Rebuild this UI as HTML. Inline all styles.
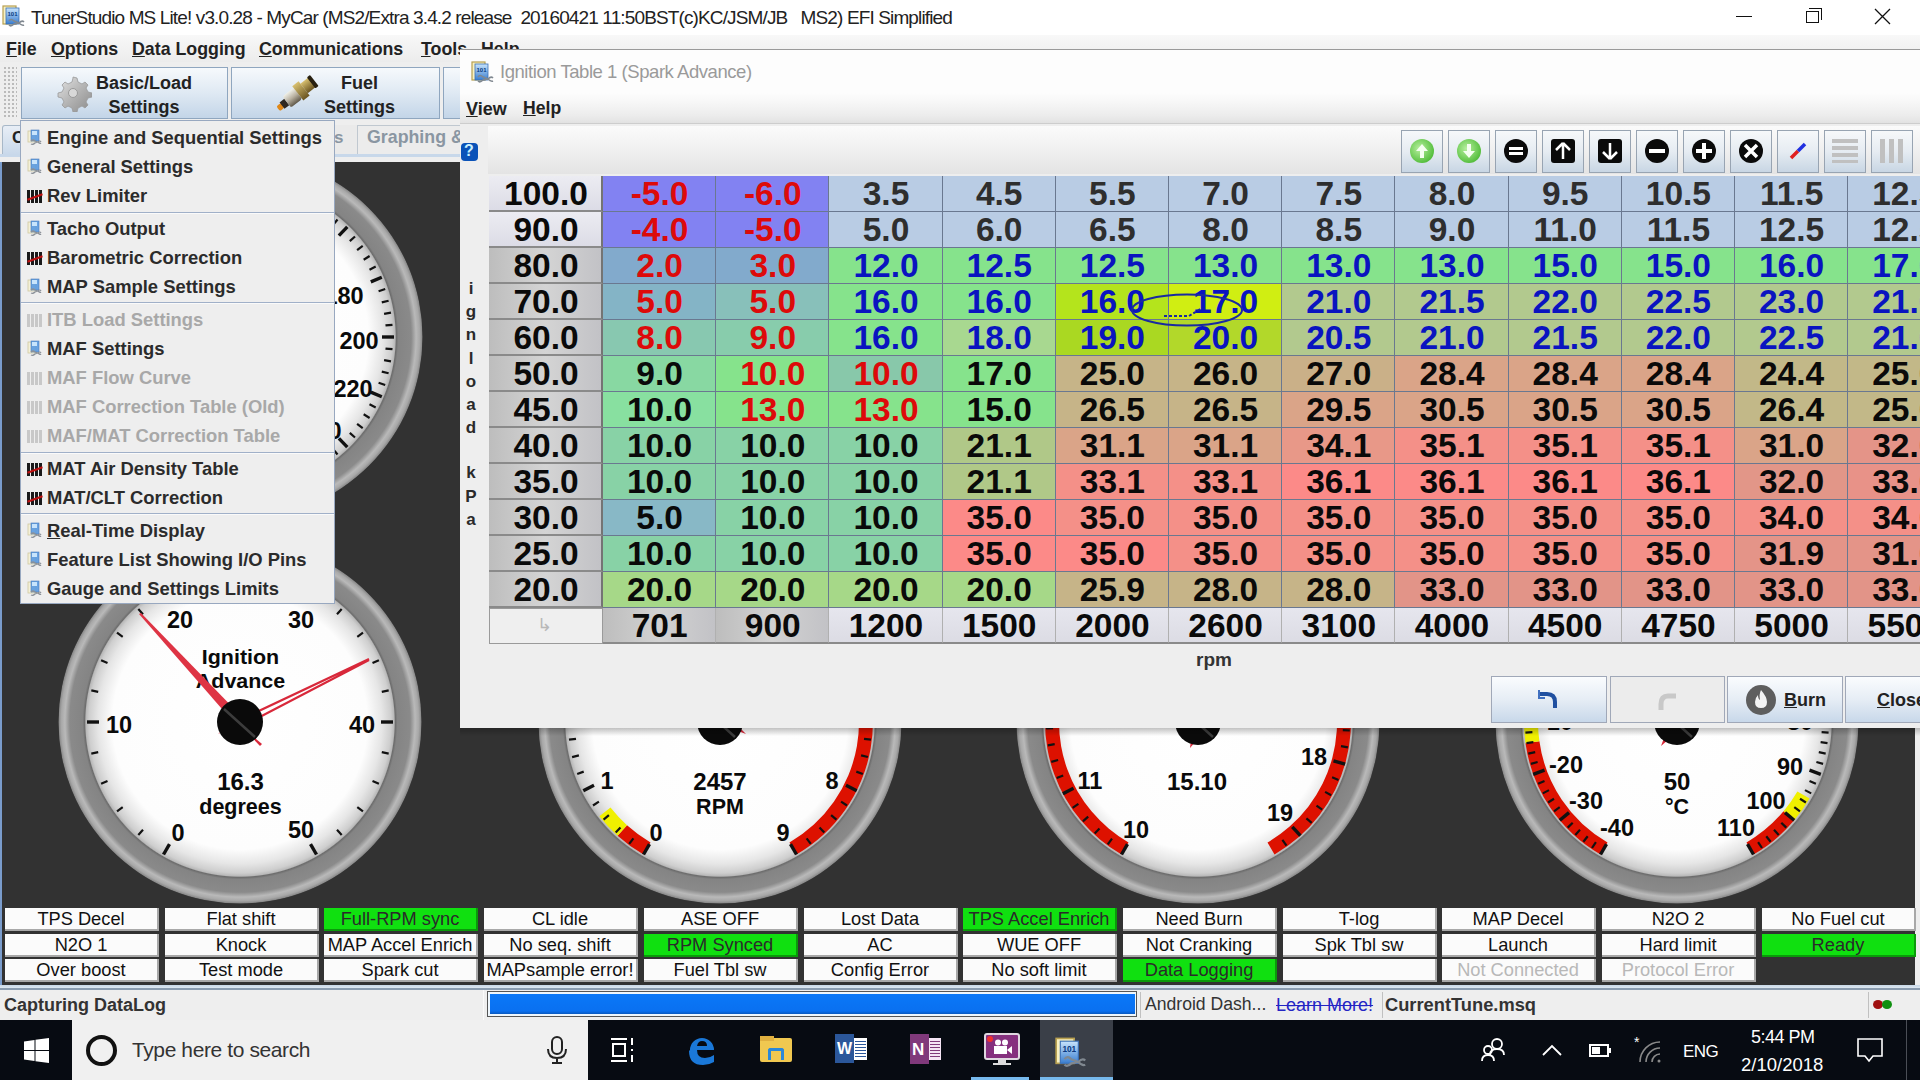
<!DOCTYPE html><html><head><meta charset="utf-8"><style>
*{margin:0;padding:0;box-sizing:border-box}
html,body{width:1920px;height:1080px;overflow:hidden;background:#333;font-family:"Liberation Sans",sans-serif}
.a{position:absolute}
.t{position:absolute;white-space:nowrap;line-height:1}
.b{font-weight:bold}
.u{text-decoration:underline}
</style></head><body>
<div class="a" style="left:0;top:0;width:1920px;height:35px;background:#fff"></div>
<svg class="a" style="left:0px;top:0px" width="26" height="28" viewBox="0 0 26 28"><defs><linearGradient id="tsg" x1="0" y1="0" x2="0" y2="1"><stop offset="0" stop-color="#c8e4fc"/><stop offset="1" stop-color="#3a7ed0"/></linearGradient></defs><rect x="3" y="6" width="13" height="18" fill="#f8f0c0" stroke="#b8a050" stroke-width="1.2"/><rect x="6" y="8" width="13" height="16" fill="url(#tsg)" stroke="#3a70b8" stroke-width="0.8"/><text x="12.5" y="16" font-family="Liberation Sans" font-weight="bold" font-size="6" text-anchor="middle" fill="#0a3a80">101</text><path d="M9 21 Q11 18 14 21 L19 23 Q22 20 24 22 M9 25 Q11 27 14 24 L19 23 Q22 26 24 25" stroke="#808890" stroke-width="1.6" fill="none"/></svg>
<div class="t" style="left:31px;top:8px;font-size:19px;letter-spacing:-0.87px;color:#222">TunerStudio MS Lite! v3.0.28 - MyCar (MS2/Extra 3.4.2 release&nbsp; 20160421 11:50BST(c)KC/JSM/JB&nbsp;&nbsp; MS2) EFI Simplified</div>
<div class="a" style="left:1736px;top:16px;width:16px;height:1px;background:#111"></div>
<div class="a" style="left:1806px;top:11px;width:13px;height:12px;border:1px solid #111;background:#fff"></div>
<div class="a" style="left:1809px;top:8px;width:13px;height:12px;border-top:1px solid #111;border-right:1px solid #111"></div>
<svg class="a" style="left:1874px;top:8px" width="17" height="17"><path d="M1 1L16 16M16 1L1 16" stroke="#111" stroke-width="1.3"/></svg>
<div class="a" style="left:0;top:35px;width:1920px;height:27px;background:linear-gradient(#f8f8f8,#ececec)"></div>
<div class="t b" style="left:6px;top:41px;font-size:17.8px;color:#222"><span class="u">F</span>ile</div>
<div class="t b" style="left:51px;top:41px;font-size:17.8px;color:#222"><span class="u">O</span>ptions</div>
<div class="t b" style="left:132px;top:41px;font-size:17.8px;color:#222"><span class="u">D</span>ata Logging</div>
<div class="t b" style="left:259px;top:41px;font-size:17.8px;color:#222"><span class="u">C</span>ommunications</div>
<div class="t b" style="left:421px;top:41px;font-size:17.8px;color:#222"><span class="u">T</span>ools</div>
<div class="t b" style="left:481px;top:41px;font-size:17.8px;color:#222"><span class="u">H</span>elp</div>
<div class="a" style="left:0;top:62px;width:460px;height:100px;background:#eeeeee"></div>
<div class="a" style="left:3px;top:66px;width:14px;height:52px;background-image:radial-gradient(#bbb 1px,transparent 1.2px);background-size:4px 4px"></div>
<div class="a" style="left:21px;top:67px;width:207px;height:52px;border:1px solid #8fa6bf;background:linear-gradient(#f6f9fc,#dfe9f3 50%,#c3d5e8)"></div>
<div class="t b" style="left:96px;top:70.5px;font-size:18px;color:#222;text-align:center;line-height:24px">Basic/Load<br>Settings</div>
<div class="a" style="left:231px;top:67px;width:209px;height:52px;border:1px solid #8fa6bf;background:linear-gradient(#f6f9fc,#dfe9f3 50%,#c3d5e8)"></div>
<div class="t b" style="left:324px;top:70.5px;font-size:18px;color:#222;text-align:center;line-height:24px">Fuel<br>Settings</div>
<div class="a" style="left:443px;top:67px;width:40px;height:52px;border:1px solid #8fa6bf;background:linear-gradient(#f6f9fc,#dfe9f3 50%,#c3d5e8)"></div>
<div class="t b" style="left:0px;top:70.5px;font-size:18px;color:#222;text-align:center;line-height:24px"><br></div>
<svg class="a" style="left:54px;top:74px" width="38" height="38" viewBox="0 0 38 38"><defs><linearGradient id="gr1" x1="0" y1="0" x2="1" y2="1"><stop offset="0" stop-color="#e4e4e4"/><stop offset="0.5" stop-color="#b4b4b4"/><stop offset="1" stop-color="#8a8a8a"/></linearGradient></defs><g fill="url(#gr1)" stroke="#999" stroke-width="0.8"><path d="M19 3l4 1 1 4 4 2 3-2 3 3-2 3 2 4 4 1v4l-4 1-2 4 2 3-3 3-3-2-4 2-1 4h-4l-1-4-4-2-3 2-3-3 2-3-2-4-4-1v-4l4-1 2-4-2-3 3-3 3 2 4-2 1-4z"/></g><circle cx="19" cy="19" r="4.5" fill="#d8d8d8" stroke="#999"/></svg>
<svg class="a" style="left:272px;top:72px" width="50" height="44" viewBox="0 0 50 44"><defs><linearGradient id="inj1" x1="0" y1="0" x2="0" y2="1"><stop offset="0" stop-color="#f0f0e8"/><stop offset="0.5" stop-color="#b8b0a0"/><stop offset="1" stop-color="#605848"/></linearGradient><linearGradient id="inj2" x1="0" y1="0" x2="0" y2="1"><stop offset="0" stop-color="#d8c070"/><stop offset="1" stop-color="#6a5420"/></linearGradient></defs><g transform="rotate(-38 25 22)"><rect x="1" y="19" width="6" height="6" rx="2" fill="#e08818"/><rect x="6" y="18" width="6" height="8" fill="#302820"/><rect x="12" y="15" width="14" height="14" rx="2" fill="url(#inj1)"/><rect x="26" y="13" width="8" height="18" fill="url(#inj2)"/><rect x="34" y="16" width="10" height="12" fill="url(#inj2)"/><rect x="43" y="15" width="4" height="14" rx="1" fill="#282010"/></g></svg>
<div class="a" style="left:0;top:119px;width:460px;height:43px;background:#eeeeee"></div>
<div class="a" style="left:2px;top:125px;width:60px;height:30px;border:1px solid #a8b8c8;border-bottom:none;background:linear-gradient(#e8eef6,#c8d8ea);border-radius:3px 3px 0 0"></div>
<div class="t b" style="left:12px;top:129px;font-size:17px;color:#222">C</div>
<div class="a" style="left:0;top:154px;width:460px;height:3px;background:#c8d8ea"></div>
<div class="a" style="left:334px;top:125px;width:24px;height:29px;border-right:1px solid #c0c8d0;background:#eaeaea"></div>
<div class="t b" style="left:334px;top:129px;font-size:17px;color:#8a96a2">s</div>
<div class="a" style="left:357px;top:125px;width:110px;height:29px;border-left:1px solid #c0c8d0;border-top:1px solid #c0c8d0;background:#ececec"></div>
<div class="t b" style="left:367px;top:129px;font-size:17.8px;color:#8a96a2">Graphing &amp;</div>
<div class="a" style="left:0;top:162px;width:1920px;height:826px;background:#323232"></div>
<div class="a" style="left:0;top:162px;width:2px;height:826px;background:#7a9ccc"></div>
<div class="a" style="left:1915px;top:162px;width:5px;height:826px;background:#eeeeee"></div>
<svg class="a" style="left:51px;top:147px" width="380" height="380" viewBox="-190 -190 380 380"><defs><radialGradient id="bz1" cx="0" cy="0" r="182" gradientUnits="userSpaceOnUse"><stop offset="0" stop-color="#fff"/><stop offset="0.70" stop-color="#fdfdfd"/><stop offset="0.78" stop-color="#e6e6e6"/><stop offset="0.83" stop-color="#cecece"/><stop offset="0.847" stop-color="#b8b8b8"/><stop offset="0.853" stop-color="#6c6c6c"/><stop offset="0.865" stop-color="#848484"/><stop offset="0.935" stop-color="#8a8a8a"/><stop offset="0.962" stop-color="#b9b9b9"/><stop offset="0.982" stop-color="#a8a8a8"/><stop offset="0.995" stop-color="#8a8a8a"/><stop offset="1" stop-color="#5a5a5a"/></radialGradient></defs><circle cx="0" cy="0" r="181.5" fill="url(#bz1)"/><line x1="-90.6" y1="108.0" x2="-98.3" y2="117.2" stroke="#111" stroke-width="3.4"/><line x1="-101.8" y1="103.2" x2="-106.7" y2="108.2" stroke="#111" stroke-width="2.2"/><line x1="-109.8" y1="94.7" x2="-115.1" y2="99.3" stroke="#111" stroke-width="2.2"/><line x1="-117.0" y1="85.6" x2="-122.7" y2="89.8" stroke="#111" stroke-width="2.2"/><line x1="-123.5" y1="76.0" x2="-129.5" y2="79.6" stroke="#111" stroke-width="2.2"/><line x1="-125.6" y1="64.0" x2="-136.3" y2="69.5" stroke="#111" stroke-width="3.4"/><line x1="-134.1" y1="55.3" x2="-140.5" y2="57.9" stroke="#111" stroke-width="2.2"/><line x1="-138.1" y1="44.3" x2="-144.7" y2="46.5" stroke="#111" stroke-width="2.2"/><line x1="-141.2" y1="33.1" x2="-148.0" y2="34.7" stroke="#111" stroke-width="2.2"/><line x1="-143.4" y1="21.7" x2="-150.3" y2="22.7" stroke="#111" stroke-width="2.2"/><line x1="-140.7" y1="9.8" x2="-152.6" y2="10.7" stroke="#111" stroke-width="3.4"/><line x1="-145.0" y1="-1.5" x2="-152.0" y2="-1.6" stroke="#111" stroke-width="2.2"/><line x1="-144.4" y1="-13.1" x2="-151.4" y2="-13.8" stroke="#111" stroke-width="2.2"/><line x1="-142.9" y1="-24.7" x2="-149.8" y2="-25.9" stroke="#111" stroke-width="2.2"/><line x1="-140.4" y1="-36.1" x2="-147.2" y2="-37.8" stroke="#111" stroke-width="2.2"/><line x1="-133.3" y1="-45.9" x2="-144.7" y2="-49.8" stroke="#111" stroke-width="3.4"/><line x1="-132.9" y1="-58.1" x2="-139.3" y2="-60.9" stroke="#111" stroke-width="2.2"/><line x1="-127.8" y1="-68.5" x2="-134.0" y2="-71.8" stroke="#111" stroke-width="2.2"/><line x1="-121.9" y1="-78.5" x2="-127.8" y2="-82.3" stroke="#111" stroke-width="2.2"/><line x1="-115.2" y1="-88.1" x2="-120.8" y2="-92.3" stroke="#111" stroke-width="2.2"/><line x1="-104.8" y1="-94.3" x2="-113.7" y2="-102.4" stroke="#111" stroke-width="3.4"/><line x1="-99.6" y1="-105.4" x2="-104.4" y2="-110.4" stroke="#111" stroke-width="2.2"/><line x1="-90.9" y1="-113.0" x2="-95.2" y2="-118.5" stroke="#111" stroke-width="2.2"/><line x1="-81.5" y1="-119.9" x2="-85.4" y2="-125.7" stroke="#111" stroke-width="2.2"/><line x1="-71.6" y1="-126.1" x2="-75.1" y2="-132.2" stroke="#111" stroke-width="2.2"/><line x1="-59.6" y1="-127.8" x2="-64.7" y2="-138.7" stroke="#111" stroke-width="3.4"/><line x1="-50.5" y1="-135.9" x2="-53.0" y2="-142.5" stroke="#111" stroke-width="2.2"/><line x1="-39.5" y1="-139.5" x2="-41.4" y2="-146.3" stroke="#111" stroke-width="2.2"/><line x1="-28.2" y1="-142.2" x2="-29.5" y2="-149.1" stroke="#111" stroke-width="2.2"/><line x1="-16.7" y1="-144.0" x2="-17.5" y2="-151.0" stroke="#111" stroke-width="2.2"/><line x1="-4.9" y1="-140.9" x2="-5.3" y2="-152.9" stroke="#111" stroke-width="3.4"/><line x1="6.6" y1="-144.9" x2="6.9" y2="-151.8" stroke="#111" stroke-width="2.2"/><line x1="18.2" y1="-143.9" x2="19.1" y2="-150.8" stroke="#111" stroke-width="2.2"/><line x1="29.7" y1="-141.9" x2="31.1" y2="-148.8" stroke="#111" stroke-width="2.2"/><line x1="40.9" y1="-139.1" x2="42.9" y2="-145.8" stroke="#111" stroke-width="2.2"/><line x1="50.5" y1="-131.6" x2="54.8" y2="-142.8" stroke="#111" stroke-width="3.4"/><line x1="62.7" y1="-130.8" x2="65.7" y2="-137.1" stroke="#111" stroke-width="2.2"/><line x1="72.9" y1="-125.3" x2="76.5" y2="-131.4" stroke="#111" stroke-width="2.2"/><line x1="82.8" y1="-119.1" x2="86.7" y2="-124.8" stroke="#111" stroke-width="2.2"/><line x1="92.0" y1="-112.0" x2="96.5" y2="-117.5" stroke="#111" stroke-width="2.2"/><line x1="97.9" y1="-101.4" x2="106.3" y2="-110.1" stroke="#111" stroke-width="3.4"/><line x1="108.8" y1="-95.9" x2="114.0" y2="-100.5" stroke="#111" stroke-width="2.2"/><line x1="116.1" y1="-86.9" x2="121.7" y2="-91.1" stroke="#111" stroke-width="2.2"/><line x1="122.7" y1="-77.3" x2="128.6" y2="-81.0" stroke="#111" stroke-width="2.2"/><line x1="128.5" y1="-67.2" x2="134.7" y2="-70.4" stroke="#111" stroke-width="2.2"/><line x1="129.8" y1="-55.1" x2="140.8" y2="-59.8" stroke="#111" stroke-width="3.4"/><line x1="137.6" y1="-45.8" x2="144.2" y2="-48.0" stroke="#111" stroke-width="2.2"/><line x1="140.8" y1="-34.6" x2="147.6" y2="-36.3" stroke="#111" stroke-width="2.2"/><line x1="143.1" y1="-23.2" x2="150.0" y2="-24.3" stroke="#111" stroke-width="2.2"/><line x1="144.5" y1="-11.6" x2="151.5" y2="-12.2" stroke="#111" stroke-width="2.2"/><line x1="141.0" y1="-0.0" x2="153.0" y2="-0.0" stroke="#111" stroke-width="3.4"/><line x1="144.5" y1="11.6" x2="151.5" y2="12.2" stroke="#111" stroke-width="2.2"/><line x1="143.1" y1="23.2" x2="150.0" y2="24.3" stroke="#111" stroke-width="2.2"/><line x1="140.8" y1="34.6" x2="147.6" y2="36.3" stroke="#111" stroke-width="2.2"/><line x1="137.6" y1="45.8" x2="144.2" y2="48.0" stroke="#111" stroke-width="2.2"/><line x1="129.8" y1="55.1" x2="140.8" y2="59.8" stroke="#111" stroke-width="3.4"/><line x1="128.5" y1="67.2" x2="134.7" y2="70.4" stroke="#111" stroke-width="2.2"/><line x1="122.7" y1="77.3" x2="128.6" y2="81.0" stroke="#111" stroke-width="2.2"/><line x1="116.1" y1="86.9" x2="121.7" y2="91.1" stroke="#111" stroke-width="2.2"/><line x1="108.8" y1="95.9" x2="114.0" y2="100.5" stroke="#111" stroke-width="2.2"/><line x1="97.9" y1="101.4" x2="106.3" y2="110.1" stroke="#111" stroke-width="3.4"/><line x1="92.0" y1="112.0" x2="96.5" y2="117.5" stroke="#111" stroke-width="2.2"/><line x1="82.8" y1="119.1" x2="86.7" y2="124.8" stroke="#111" stroke-width="2.2"/><line x1="72.9" y1="125.3" x2="76.5" y2="131.4" stroke="#111" stroke-width="2.2"/><line x1="62.7" y1="130.8" x2="65.7" y2="137.1" stroke="#111" stroke-width="2.2"/><line x1="50.5" y1="131.6" x2="54.8" y2="142.8" stroke="#111" stroke-width="3.4"/><text transform="translate(103.0,-32.6) scale(1.0,1)" font-family="Liberation Sans" font-weight="bold" font-size="23.5" text-anchor="middle" fill="#0a0a0a">180</text><text transform="translate(118.0,12.4) scale(1.0,1)" font-family="Liberation Sans" font-weight="bold" font-size="23.5" text-anchor="middle" fill="#0a0a0a">200</text><text transform="translate(112.0,60.4) scale(1.0,1)" font-family="Liberation Sans" font-weight="bold" font-size="23.5" text-anchor="middle" fill="#0a0a0a">220</text><text transform="translate(81.0,102.4) scale(1.0,1)" font-family="Liberation Sans" font-weight="bold" font-size="23.5" text-anchor="middle" fill="#0a0a0a">240</text></svg>
<svg class="a" style="left:50px;top:532px" width="380" height="380" viewBox="-190 -190 380 380"><defs><radialGradient id="bz2" cx="0" cy="0" r="182" gradientUnits="userSpaceOnUse"><stop offset="0" stop-color="#fff"/><stop offset="0.70" stop-color="#fdfdfd"/><stop offset="0.78" stop-color="#e6e6e6"/><stop offset="0.83" stop-color="#cecece"/><stop offset="0.847" stop-color="#b8b8b8"/><stop offset="0.853" stop-color="#6c6c6c"/><stop offset="0.865" stop-color="#848484"/><stop offset="0.935" stop-color="#8a8a8a"/><stop offset="0.962" stop-color="#b9b9b9"/><stop offset="0.982" stop-color="#a8a8a8"/><stop offset="0.995" stop-color="#8a8a8a"/><stop offset="1" stop-color="#5a5a5a"/></radialGradient></defs><circle cx="0" cy="0" r="181.5" fill="url(#bz2)"/><line x1="-70.5" y1="122.1" x2="-76.5" y2="132.5" stroke="#111" stroke-width="3.4"/><line x1="-97.0" y1="107.8" x2="-101.7" y2="113.0" stroke="#111" stroke-width="2.2"/><line x1="-117.3" y1="85.2" x2="-123.0" y2="89.3" stroke="#111" stroke-width="2.2"/><line x1="-132.5" y1="59.0" x2="-138.9" y2="61.8" stroke="#111" stroke-width="2.2"/><line x1="-141.8" y1="30.1" x2="-148.7" y2="31.6" stroke="#111" stroke-width="2.2"/><line x1="-141.0" y1="0.0" x2="-153.0" y2="0.0" stroke="#111" stroke-width="3.4"/><line x1="-141.8" y1="-30.1" x2="-148.7" y2="-31.6" stroke="#111" stroke-width="2.2"/><line x1="-132.5" y1="-59.0" x2="-138.9" y2="-61.8" stroke="#111" stroke-width="2.2"/><line x1="-117.3" y1="-85.2" x2="-123.0" y2="-89.3" stroke="#111" stroke-width="2.2"/><line x1="-97.0" y1="-107.8" x2="-101.7" y2="-113.0" stroke="#111" stroke-width="2.2"/><line x1="-70.5" y1="-122.1" x2="-76.5" y2="-132.5" stroke="#111" stroke-width="3.4"/><line x1="-44.8" y1="-137.9" x2="-47.0" y2="-144.6" stroke="#111" stroke-width="2.2"/><line x1="-15.2" y1="-144.2" x2="-15.9" y2="-151.2" stroke="#111" stroke-width="2.2"/><line x1="15.2" y1="-144.2" x2="15.9" y2="-151.2" stroke="#111" stroke-width="2.2"/><line x1="44.8" y1="-137.9" x2="47.0" y2="-144.6" stroke="#111" stroke-width="2.2"/><line x1="70.5" y1="-122.1" x2="76.5" y2="-132.5" stroke="#111" stroke-width="3.4"/><line x1="97.0" y1="-107.8" x2="101.7" y2="-113.0" stroke="#111" stroke-width="2.2"/><line x1="117.3" y1="-85.2" x2="123.0" y2="-89.3" stroke="#111" stroke-width="2.2"/><line x1="132.5" y1="-59.0" x2="138.9" y2="-61.8" stroke="#111" stroke-width="2.2"/><line x1="141.8" y1="-30.1" x2="148.7" y2="-31.6" stroke="#111" stroke-width="2.2"/><line x1="141.0" y1="-0.0" x2="153.0" y2="-0.0" stroke="#111" stroke-width="3.4"/><line x1="141.8" y1="30.1" x2="148.7" y2="31.6" stroke="#111" stroke-width="2.2"/><line x1="132.5" y1="59.0" x2="138.9" y2="61.8" stroke="#111" stroke-width="2.2"/><line x1="117.3" y1="85.2" x2="123.0" y2="89.3" stroke="#111" stroke-width="2.2"/><line x1="97.0" y1="107.8" x2="101.7" y2="113.0" stroke="#111" stroke-width="2.2"/><line x1="70.5" y1="122.1" x2="76.5" y2="132.5" stroke="#111" stroke-width="3.4"/><text transform="translate(-62.0,119.4) scale(1.0,1)" font-family="Liberation Sans" font-weight="bold" font-size="23.5" text-anchor="middle" fill="#0a0a0a">0</text><text transform="translate(-121.0,11.4) scale(1.0,1)" font-family="Liberation Sans" font-weight="bold" font-size="23.5" text-anchor="middle" fill="#0a0a0a">10</text><text transform="translate(-60.0,-93.6) scale(1.0,1)" font-family="Liberation Sans" font-weight="bold" font-size="23.5" text-anchor="middle" fill="#0a0a0a">20</text><text transform="translate(61.0,-93.6) scale(1.0,1)" font-family="Liberation Sans" font-weight="bold" font-size="23.5" text-anchor="middle" fill="#0a0a0a">30</text><text transform="translate(122.0,11.4) scale(1.0,1)" font-family="Liberation Sans" font-weight="bold" font-size="23.5" text-anchor="middle" fill="#0a0a0a">40</text><text transform="translate(61.0,116.4) scale(1.0,1)" font-family="Liberation Sans" font-weight="bold" font-size="23.5" text-anchor="middle" fill="#0a0a0a">50</text><text transform="translate(0.5,-58.0) scale(1.1,1)" font-family="Liberation Sans" font-weight="bold" font-size="19.5" text-anchor="middle" fill="#0a0a0a">Ignition</text><text transform="translate(0.5,-34.0) scale(1.1,1)" font-family="Liberation Sans" font-weight="bold" font-size="19.5" text-anchor="middle" fill="#0a0a0a">Advance</text><text transform="translate(0.5,67.6) scale(1.0,1)" font-family="Liberation Sans" font-weight="bold" font-size="24" text-anchor="middle" fill="#0a0a0a">16.3</text><text transform="translate(0.5,91.7) scale(1.0,1)" font-family="Liberation Sans" font-weight="bold" font-size="21.5" text-anchor="middle" fill="#0a0a0a">degrees</text><path d="M-4 3 L-101 -108 L-99 -109 L4 -3 Z" fill="#de3444"/><path d="M3 6 L22 22 L20 24 Z" fill="#d8283a"/><path d="M-4 4 L-22 12 L-12 4Z" fill="#d8283a"/><path d="M8 -6 L129 -63 M10 0 L129 -62" stroke="#d8283a" stroke-width="2.2" fill="none"/><circle cx="0" cy="0" r="23" fill="#0a0a0a"/><path d="M-16 -13 L15 15" stroke="#666" stroke-width="2.5" opacity="0.55"/></svg>
<svg class="a" style="left:530px;top:532px" width="380" height="380" viewBox="-190 -190 380 380"><defs><radialGradient id="bz3" cx="0" cy="0" r="182" gradientUnits="userSpaceOnUse"><stop offset="0" stop-color="#fff"/><stop offset="0.70" stop-color="#fdfdfd"/><stop offset="0.78" stop-color="#e6e6e6"/><stop offset="0.83" stop-color="#cecece"/><stop offset="0.847" stop-color="#b8b8b8"/><stop offset="0.853" stop-color="#6c6c6c"/><stop offset="0.865" stop-color="#848484"/><stop offset="0.935" stop-color="#8a8a8a"/><stop offset="0.962" stop-color="#b9b9b9"/><stop offset="0.982" stop-color="#a8a8a8"/><stop offset="0.995" stop-color="#8a8a8a"/><stop offset="1" stop-color="#5a5a5a"/></radialGradient></defs><circle cx="0" cy="0" r="181.5" fill="url(#bz3)"/><path d="M-76.5 132.5 A153 153 0 0 1 -102.4 113.7 L-93.0 103.3 A139 139 0 0 0 -69.5 120.4Z" fill="#dd1100"/><path d="M-102.4 113.7 A153 153 0 0 1 -120.6 94.2 L-109.5 85.6 A139 139 0 0 0 -93.0 103.3Z" fill="#f0f000"/><path d="M117.2 -98.3 A153 153 0 0 1 76.5 132.5 L69.5 120.4 A139 139 0 0 0 106.5 -89.3Z" fill="#dd1100"/><line x1="-70.5" y1="122.1" x2="-76.5" y2="132.5" stroke="#111" stroke-width="3.4"/><line x1="-86.6" y1="116.3" x2="-90.8" y2="121.9" stroke="#111" stroke-width="2.2"/><line x1="-99.5" y1="105.5" x2="-104.3" y2="110.6" stroke="#111" stroke-width="2.2"/><line x1="-111.1" y1="93.2" x2="-116.4" y2="97.7" stroke="#111" stroke-width="2.2"/><line x1="-121.1" y1="79.7" x2="-127.0" y2="83.5" stroke="#111" stroke-width="2.2"/><line x1="-126.0" y1="63.3" x2="-136.7" y2="68.7" stroke="#111" stroke-width="3.4"/><line x1="-136.3" y1="49.6" x2="-142.8" y2="52.0" stroke="#111" stroke-width="2.2"/><line x1="-141.1" y1="33.4" x2="-147.9" y2="35.1" stroke="#111" stroke-width="2.2"/><line x1="-144.0" y1="16.8" x2="-151.0" y2="17.6" stroke="#111" stroke-width="2.2"/><line x1="-145.0" y1="0.0" x2="-152.0" y2="0.0" stroke="#111" stroke-width="2.2"/><line x1="-140.0" y1="-16.4" x2="-152.0" y2="-17.8" stroke="#111" stroke-width="3.4"/><line x1="-141.1" y1="-33.4" x2="-147.9" y2="-35.1" stroke="#111" stroke-width="2.2"/><line x1="-136.3" y1="-49.6" x2="-142.8" y2="-52.0" stroke="#111" stroke-width="2.2"/><line x1="-129.6" y1="-65.1" x2="-135.8" y2="-68.2" stroke="#111" stroke-width="2.2"/><line x1="-121.1" y1="-79.7" x2="-127.0" y2="-83.5" stroke="#111" stroke-width="2.2"/><line x1="-108.0" y1="-90.6" x2="-117.2" y2="-98.3" stroke="#111" stroke-width="3.4"/><line x1="-99.5" y1="-105.5" x2="-104.3" y2="-110.6" stroke="#111" stroke-width="2.2"/><line x1="-86.6" y1="-116.3" x2="-90.8" y2="-121.9" stroke="#111" stroke-width="2.2"/><line x1="-72.5" y1="-125.6" x2="-76.0" y2="-131.6" stroke="#111" stroke-width="2.2"/><line x1="-57.4" y1="-133.1" x2="-60.2" y2="-139.6" stroke="#111" stroke-width="2.2"/><line x1="-40.4" y1="-135.1" x2="-43.9" y2="-146.6" stroke="#111" stroke-width="3.4"/><line x1="-25.2" y1="-142.8" x2="-26.4" y2="-149.7" stroke="#111" stroke-width="2.2"/><line x1="-8.4" y1="-144.8" x2="-8.8" y2="-151.7" stroke="#111" stroke-width="2.2"/><line x1="8.4" y1="-144.8" x2="8.8" y2="-151.7" stroke="#111" stroke-width="2.2"/><line x1="25.2" y1="-142.8" x2="26.4" y2="-149.7" stroke="#111" stroke-width="2.2"/><line x1="40.4" y1="-135.1" x2="43.9" y2="-146.6" stroke="#111" stroke-width="3.4"/><line x1="57.4" y1="-133.1" x2="60.2" y2="-139.6" stroke="#111" stroke-width="2.2"/><line x1="72.5" y1="-125.6" x2="76.0" y2="-131.6" stroke="#111" stroke-width="2.2"/><line x1="86.6" y1="-116.3" x2="90.8" y2="-121.9" stroke="#111" stroke-width="2.2"/><line x1="99.5" y1="-105.5" x2="104.3" y2="-110.6" stroke="#111" stroke-width="2.2"/><line x1="108.0" y1="-90.6" x2="117.2" y2="-98.4" stroke="#111" stroke-width="3.4"/><line x1="121.1" y1="-79.7" x2="127.0" y2="-83.5" stroke="#111" stroke-width="2.2"/><line x1="129.6" y1="-65.1" x2="135.8" y2="-68.2" stroke="#111" stroke-width="2.2"/><line x1="136.3" y1="-49.6" x2="142.8" y2="-52.0" stroke="#111" stroke-width="2.2"/><line x1="141.1" y1="-33.4" x2="147.9" y2="-35.1" stroke="#111" stroke-width="2.2"/><line x1="140.0" y1="-16.4" x2="152.0" y2="-17.8" stroke="#111" stroke-width="3.4"/><line x1="145.0" y1="-0.0" x2="152.0" y2="-0.0" stroke="#111" stroke-width="2.2"/><line x1="144.0" y1="16.8" x2="151.0" y2="17.6" stroke="#111" stroke-width="2.2"/><line x1="141.1" y1="33.4" x2="147.9" y2="35.0" stroke="#111" stroke-width="2.2"/><line x1="136.3" y1="49.6" x2="142.8" y2="52.0" stroke="#111" stroke-width="2.2"/><line x1="126.0" y1="63.3" x2="136.7" y2="68.7" stroke="#111" stroke-width="3.4"/><line x1="121.1" y1="79.7" x2="127.0" y2="83.5" stroke="#111" stroke-width="2.2"/><line x1="111.1" y1="93.2" x2="116.4" y2="97.7" stroke="#111" stroke-width="2.2"/><line x1="99.5" y1="105.5" x2="104.3" y2="110.6" stroke="#111" stroke-width="2.2"/><line x1="86.6" y1="116.3" x2="90.8" y2="121.9" stroke="#111" stroke-width="2.2"/><line x1="70.5" y1="122.1" x2="76.5" y2="132.5" stroke="#111" stroke-width="3.4"/><text transform="translate(-64.0,119.4) scale(1.0,1)" font-family="Liberation Sans" font-weight="bold" font-size="23.5" text-anchor="middle" fill="#0a0a0a">0</text><text transform="translate(-113.0,67.4) scale(1.0,1)" font-family="Liberation Sans" font-weight="bold" font-size="23.5" text-anchor="middle" fill="#0a0a0a">1</text><text transform="translate(112.0,67.4) scale(1.0,1)" font-family="Liberation Sans" font-weight="bold" font-size="23.5" text-anchor="middle" fill="#0a0a0a">8</text><text transform="translate(63.0,119.4) scale(1.0,1)" font-family="Liberation Sans" font-weight="bold" font-size="23.5" text-anchor="middle" fill="#0a0a0a">9</text><text transform="translate(0.0,67.6) scale(1.0,1)" font-family="Liberation Sans" font-weight="bold" font-size="24" text-anchor="middle" fill="#0a0a0a">2457</text><text transform="translate(0.0,91.7) scale(1.0,1)" font-family="Liberation Sans" font-weight="bold" font-size="21.5" text-anchor="middle" fill="#0a0a0a">RPM</text><path d="M10 6 L26 12 L12 -2Z" fill="#d8283a"/><circle cx="0" cy="0" r="23" fill="#0a0a0a"/><path d="M-16 -13 L15 15" stroke="#666" stroke-width="2.5" opacity="0.55"/></svg>
<svg class="a" style="left:1008px;top:532px" width="380" height="380" viewBox="-190 -190 380 380"><defs><radialGradient id="bz4" cx="0" cy="0" r="182" gradientUnits="userSpaceOnUse"><stop offset="0" stop-color="#fff"/><stop offset="0.70" stop-color="#fdfdfd"/><stop offset="0.78" stop-color="#e6e6e6"/><stop offset="0.83" stop-color="#cecece"/><stop offset="0.847" stop-color="#b8b8b8"/><stop offset="0.853" stop-color="#6c6c6c"/><stop offset="0.865" stop-color="#848484"/><stop offset="0.935" stop-color="#8a8a8a"/><stop offset="0.962" stop-color="#b9b9b9"/><stop offset="0.982" stop-color="#a8a8a8"/><stop offset="0.995" stop-color="#8a8a8a"/><stop offset="1" stop-color="#5a5a5a"/></radialGradient></defs><circle cx="0" cy="0" r="181.5" fill="url(#bz4)"/><path d="M-76.5 132.5 A153 153 0 0 1 -143.8 -52.3 L-130.6 -47.5 A139 139 0 0 0 -69.5 120.4Z" fill="#dd1100"/><path d="M132.5 -76.5 A153 153 0 0 1 76.5 132.5 L69.5 120.4 A139 139 0 0 0 120.4 -69.5Z" fill="#dd1100"/><line x1="-70.5" y1="122.1" x2="-76.5" y2="132.5" stroke="#111" stroke-width="3.4"/><line x1="-86.0" y1="116.7" x2="-90.2" y2="122.3" stroke="#111" stroke-width="2.2"/><line x1="-98.5" y1="106.4" x2="-103.3" y2="111.5" stroke="#111" stroke-width="2.2"/><line x1="-109.8" y1="94.7" x2="-115.1" y2="99.3" stroke="#111" stroke-width="2.2"/><line x1="-119.6" y1="81.9" x2="-125.4" y2="85.9" stroke="#111" stroke-width="2.2"/><line x1="-124.5" y1="66.2" x2="-135.1" y2="71.8" stroke="#111" stroke-width="3.4"/><line x1="-134.8" y1="53.4" x2="-141.3" y2="56.0" stroke="#111" stroke-width="2.2"/><line x1="-139.9" y1="38.0" x2="-146.7" y2="39.9" stroke="#111" stroke-width="2.2"/><line x1="-143.3" y1="22.2" x2="-150.2" y2="23.3" stroke="#111" stroke-width="2.2"/><line x1="-144.9" y1="6.1" x2="-151.9" y2="6.4" stroke="#111" stroke-width="2.2"/><line x1="-140.7" y1="-9.8" x2="-152.6" y2="-10.7" stroke="#111" stroke-width="3.4"/><line x1="-142.6" y1="-26.2" x2="-149.5" y2="-27.4" stroke="#111" stroke-width="2.2"/><line x1="-138.8" y1="-41.9" x2="-145.5" y2="-43.9" stroke="#111" stroke-width="2.2"/><line x1="-133.3" y1="-57.1" x2="-139.7" y2="-59.9" stroke="#111" stroke-width="2.2"/><line x1="-126.1" y1="-71.6" x2="-132.2" y2="-75.1" stroke="#111" stroke-width="2.2"/><line x1="-114.1" y1="-82.9" x2="-123.8" y2="-89.9" stroke="#111" stroke-width="3.4"/><line x1="-107.1" y1="-97.8" x2="-112.2" y2="-102.5" stroke="#111" stroke-width="2.2"/><line x1="-95.5" y1="-109.1" x2="-100.1" y2="-114.4" stroke="#111" stroke-width="2.2"/><line x1="-82.8" y1="-119.1" x2="-86.7" y2="-124.8" stroke="#111" stroke-width="2.2"/><line x1="-69.0" y1="-127.5" x2="-72.3" y2="-133.7" stroke="#111" stroke-width="2.2"/><line x1="-52.8" y1="-130.7" x2="-57.3" y2="-141.9" stroke="#111" stroke-width="3.4"/><line x1="-39.0" y1="-139.7" x2="-40.9" y2="-146.4" stroke="#111" stroke-width="2.2"/><line x1="-23.2" y1="-143.1" x2="-24.3" y2="-150.0" stroke="#111" stroke-width="2.2"/><line x1="-7.1" y1="-144.8" x2="-7.4" y2="-151.8" stroke="#111" stroke-width="2.2"/><line x1="9.1" y1="-144.7" x2="9.5" y2="-151.7" stroke="#111" stroke-width="2.2"/><line x1="24.5" y1="-138.9" x2="26.6" y2="-150.7" stroke="#111" stroke-width="3.4"/><line x1="40.9" y1="-139.1" x2="42.9" y2="-145.8" stroke="#111" stroke-width="2.2"/><line x1="56.2" y1="-133.7" x2="58.9" y2="-140.1" stroke="#111" stroke-width="2.2"/><line x1="70.7" y1="-126.6" x2="74.2" y2="-132.7" stroke="#111" stroke-width="2.2"/><line x1="84.4" y1="-117.9" x2="88.5" y2="-123.6" stroke="#111" stroke-width="2.2"/><line x1="94.3" y1="-104.8" x2="102.4" y2="-113.7" stroke="#111" stroke-width="3.4"/><line x1="108.4" y1="-96.3" x2="113.7" y2="-100.9" stroke="#111" stroke-width="2.2"/><line x1="118.5" y1="-83.6" x2="124.2" y2="-87.6" stroke="#111" stroke-width="2.2"/><line x1="127.1" y1="-69.9" x2="133.2" y2="-73.2" stroke="#111" stroke-width="2.2"/><line x1="134.1" y1="-55.3" x2="140.5" y2="-57.9" stroke="#111" stroke-width="2.2"/><line x1="135.5" y1="-38.9" x2="147.1" y2="-42.2" stroke="#111" stroke-width="3.4"/><line x1="143.0" y1="-24.2" x2="149.9" y2="-25.3" stroke="#111" stroke-width="2.2"/><line x1="144.8" y1="-8.1" x2="151.8" y2="-8.5" stroke="#111" stroke-width="2.2"/><line x1="144.8" y1="8.1" x2="151.8" y2="8.5" stroke="#111" stroke-width="2.2"/><line x1="143.0" y1="24.2" x2="149.9" y2="25.3" stroke="#111" stroke-width="2.2"/><line x1="135.5" y1="38.9" x2="147.1" y2="42.2" stroke="#111" stroke-width="3.4"/><line x1="134.1" y1="55.3" x2="140.5" y2="57.9" stroke="#111" stroke-width="2.2"/><line x1="127.1" y1="69.9" x2="133.2" y2="73.2" stroke="#111" stroke-width="2.2"/><line x1="118.5" y1="83.6" x2="124.2" y2="87.6" stroke="#111" stroke-width="2.2"/><line x1="108.4" y1="96.3" x2="113.7" y2="100.9" stroke="#111" stroke-width="2.2"/><line x1="94.3" y1="104.8" x2="102.4" y2="113.7" stroke="#111" stroke-width="3.4"/><line x1="84.4" y1="117.9" x2="88.5" y2="123.6" stroke="#111" stroke-width="2.2"/><text transform="translate(-62.0,116.4) scale(1.0,1)" font-family="Liberation Sans" font-weight="bold" font-size="23.5" text-anchor="middle" fill="#0a0a0a">10</text><text transform="translate(-108.0,67.4) scale(1.0,1)" font-family="Liberation Sans" font-weight="bold" font-size="23.5" text-anchor="middle" fill="#0a0a0a">11</text><text transform="translate(116.0,43.4) scale(1.0,1)" font-family="Liberation Sans" font-weight="bold" font-size="23.5" text-anchor="middle" fill="#0a0a0a">18</text><text transform="translate(82.0,99.4) scale(1.0,1)" font-family="Liberation Sans" font-weight="bold" font-size="23.5" text-anchor="middle" fill="#0a0a0a">19</text><text transform="translate(-1.0,67.6) scale(1.0,1)" font-family="Liberation Sans" font-weight="bold" font-size="24" text-anchor="middle" fill="#0a0a0a">15.10</text><path d="M-6 10 L-8 26 L4 12Z" fill="#d8283a"/><circle cx="0" cy="0" r="23" fill="#0a0a0a"/><path d="M-16 -13 L15 15" stroke="#666" stroke-width="2.5" opacity="0.55"/></svg>
<svg class="a" style="left:1487px;top:532px" width="380" height="380" viewBox="-190 -190 380 380"><defs><radialGradient id="bz5" cx="0" cy="0" r="182" gradientUnits="userSpaceOnUse"><stop offset="0" stop-color="#fff"/><stop offset="0.70" stop-color="#fdfdfd"/><stop offset="0.78" stop-color="#e6e6e6"/><stop offset="0.83" stop-color="#cecece"/><stop offset="0.847" stop-color="#b8b8b8"/><stop offset="0.853" stop-color="#6c6c6c"/><stop offset="0.865" stop-color="#848484"/><stop offset="0.935" stop-color="#8a8a8a"/><stop offset="0.962" stop-color="#b9b9b9"/><stop offset="0.982" stop-color="#a8a8a8"/><stop offset="0.995" stop-color="#8a8a8a"/><stop offset="1" stop-color="#5a5a5a"/></radialGradient></defs><circle cx="0" cy="0" r="181.5" fill="url(#bz5)"/><path d="M-76.5 132.5 A153 153 0 0 1 -151.5 21.3 L-137.6 19.3 A139 139 0 0 0 -69.5 120.4Z" fill="#dd1100"/><path d="M-151.5 21.3 A153 153 0 0 1 -152.4 -13.3 L-138.5 -12.1 A139 139 0 0 0 -137.6 19.3Z" fill="#f0f000"/><path d="M117.2 98.3 A153 153 0 0 1 76.5 132.5 L69.5 120.4 A139 139 0 0 0 106.5 89.3Z" fill="#dd1100"/><path d="M132.5 76.5 A153 153 0 0 1 117.2 98.3 L106.5 89.3 A139 139 0 0 0 120.4 69.5Z" fill="#f0f000"/><line x1="-70.5" y1="122.1" x2="-76.5" y2="132.5" stroke="#111" stroke-width="3.4"/><line x1="-81.1" y1="120.2" x2="-85.0" y2="126.0" stroke="#111" stroke-width="2.2"/><line x1="-89.3" y1="114.3" x2="-93.6" y2="119.8" stroke="#111" stroke-width="2.2"/><line x1="-97.0" y1="107.8" x2="-101.7" y2="113.0" stroke="#111" stroke-width="2.2"/><line x1="-104.3" y1="100.7" x2="-109.3" y2="105.6" stroke="#111" stroke-width="2.2"/><line x1="-108.0" y1="90.6" x2="-117.2" y2="98.3" stroke="#111" stroke-width="3.4"/><line x1="-117.3" y1="85.2" x2="-123.0" y2="89.3" stroke="#111" stroke-width="2.2"/><line x1="-123.0" y1="76.8" x2="-128.9" y2="80.5" stroke="#111" stroke-width="2.2"/><line x1="-128.0" y1="68.1" x2="-134.2" y2="71.4" stroke="#111" stroke-width="2.2"/><line x1="-132.5" y1="59.0" x2="-138.9" y2="61.8" stroke="#111" stroke-width="2.2"/><line x1="-132.5" y1="48.2" x2="-143.8" y2="52.3" stroke="#111" stroke-width="3.4"/><line x1="-139.4" y1="40.0" x2="-146.1" y2="41.9" stroke="#111" stroke-width="2.2"/><line x1="-141.8" y1="30.1" x2="-148.7" y2="31.6" stroke="#111" stroke-width="2.2"/><line x1="-143.6" y1="20.2" x2="-150.5" y2="21.2" stroke="#111" stroke-width="2.2"/><line x1="-144.6" y1="10.1" x2="-151.6" y2="10.6" stroke="#111" stroke-width="2.2"/><line x1="-141.0" y1="0.0" x2="-153.0" y2="0.0" stroke="#111" stroke-width="3.4"/><line x1="-144.6" y1="-10.1" x2="-151.6" y2="-10.6" stroke="#111" stroke-width="2.2"/><line x1="-143.6" y1="-20.2" x2="-150.5" y2="-21.2" stroke="#111" stroke-width="2.2"/><line x1="-141.8" y1="-30.1" x2="-148.7" y2="-31.6" stroke="#111" stroke-width="2.2"/><line x1="-139.4" y1="-40.0" x2="-146.1" y2="-41.9" stroke="#111" stroke-width="2.2"/><line x1="-132.5" y1="-48.2" x2="-143.8" y2="-52.3" stroke="#111" stroke-width="3.4"/><line x1="-132.5" y1="-59.0" x2="-138.9" y2="-61.8" stroke="#111" stroke-width="2.2"/><line x1="-128.0" y1="-68.1" x2="-134.2" y2="-71.4" stroke="#111" stroke-width="2.2"/><line x1="-123.0" y1="-76.8" x2="-128.9" y2="-80.5" stroke="#111" stroke-width="2.2"/><line x1="-117.3" y1="-85.2" x2="-123.0" y2="-89.3" stroke="#111" stroke-width="2.2"/><line x1="-108.0" y1="-90.6" x2="-117.2" y2="-98.3" stroke="#111" stroke-width="3.4"/><line x1="-104.3" y1="-100.7" x2="-109.3" y2="-105.6" stroke="#111" stroke-width="2.2"/><line x1="-97.0" y1="-107.8" x2="-101.7" y2="-113.0" stroke="#111" stroke-width="2.2"/><line x1="-89.3" y1="-114.3" x2="-93.6" y2="-119.8" stroke="#111" stroke-width="2.2"/><line x1="-81.1" y1="-120.2" x2="-85.0" y2="-126.0" stroke="#111" stroke-width="2.2"/><line x1="-70.5" y1="-122.1" x2="-76.5" y2="-132.5" stroke="#111" stroke-width="3.4"/><line x1="-63.6" y1="-130.3" x2="-66.6" y2="-136.6" stroke="#111" stroke-width="2.2"/><line x1="-54.3" y1="-134.4" x2="-56.9" y2="-140.9" stroke="#111" stroke-width="2.2"/><line x1="-44.8" y1="-137.9" x2="-47.0" y2="-144.6" stroke="#111" stroke-width="2.2"/><line x1="-35.1" y1="-140.7" x2="-36.8" y2="-147.5" stroke="#111" stroke-width="2.2"/><line x1="-24.5" y1="-138.9" x2="-26.6" y2="-150.7" stroke="#111" stroke-width="3.4"/><line x1="-15.2" y1="-144.2" x2="-15.9" y2="-151.2" stroke="#111" stroke-width="2.2"/><line x1="-5.1" y1="-144.9" x2="-5.3" y2="-151.9" stroke="#111" stroke-width="2.2"/><line x1="5.1" y1="-144.9" x2="5.3" y2="-151.9" stroke="#111" stroke-width="2.2"/><line x1="15.2" y1="-144.2" x2="15.9" y2="-151.2" stroke="#111" stroke-width="2.2"/><line x1="24.5" y1="-138.9" x2="26.6" y2="-150.7" stroke="#111" stroke-width="3.4"/><line x1="35.1" y1="-140.7" x2="36.8" y2="-147.5" stroke="#111" stroke-width="2.2"/><line x1="44.8" y1="-137.9" x2="47.0" y2="-144.6" stroke="#111" stroke-width="2.2"/><line x1="54.3" y1="-134.4" x2="56.9" y2="-140.9" stroke="#111" stroke-width="2.2"/><line x1="63.6" y1="-130.3" x2="66.6" y2="-136.6" stroke="#111" stroke-width="2.2"/><line x1="70.5" y1="-122.1" x2="76.5" y2="-132.5" stroke="#111" stroke-width="3.4"/><line x1="81.1" y1="-120.2" x2="85.0" y2="-126.0" stroke="#111" stroke-width="2.2"/><line x1="89.3" y1="-114.3" x2="93.6" y2="-119.8" stroke="#111" stroke-width="2.2"/><line x1="97.0" y1="-107.8" x2="101.7" y2="-113.0" stroke="#111" stroke-width="2.2"/><line x1="104.3" y1="-100.7" x2="109.3" y2="-105.6" stroke="#111" stroke-width="2.2"/><line x1="108.0" y1="-90.6" x2="117.2" y2="-98.3" stroke="#111" stroke-width="3.4"/><line x1="117.3" y1="-85.2" x2="123.0" y2="-89.3" stroke="#111" stroke-width="2.2"/><line x1="123.0" y1="-76.8" x2="128.9" y2="-80.5" stroke="#111" stroke-width="2.2"/><line x1="128.0" y1="-68.1" x2="134.2" y2="-71.4" stroke="#111" stroke-width="2.2"/><line x1="132.5" y1="-59.0" x2="138.9" y2="-61.8" stroke="#111" stroke-width="2.2"/><line x1="132.5" y1="-48.2" x2="143.8" y2="-52.3" stroke="#111" stroke-width="3.4"/><line x1="139.4" y1="-40.0" x2="146.1" y2="-41.9" stroke="#111" stroke-width="2.2"/><line x1="141.8" y1="-30.1" x2="148.7" y2="-31.6" stroke="#111" stroke-width="2.2"/><line x1="143.6" y1="-20.2" x2="150.5" y2="-21.2" stroke="#111" stroke-width="2.2"/><line x1="144.6" y1="-10.1" x2="151.6" y2="-10.6" stroke="#111" stroke-width="2.2"/><line x1="141.0" y1="-0.0" x2="153.0" y2="-0.0" stroke="#111" stroke-width="3.4"/><line x1="144.6" y1="10.1" x2="151.6" y2="10.6" stroke="#111" stroke-width="2.2"/><line x1="143.6" y1="20.2" x2="150.5" y2="21.2" stroke="#111" stroke-width="2.2"/><line x1="141.8" y1="30.1" x2="148.7" y2="31.6" stroke="#111" stroke-width="2.2"/><line x1="139.4" y1="40.0" x2="146.1" y2="41.9" stroke="#111" stroke-width="2.2"/><line x1="132.5" y1="48.2" x2="143.8" y2="52.3" stroke="#111" stroke-width="3.4"/><line x1="132.5" y1="59.0" x2="138.9" y2="61.8" stroke="#111" stroke-width="2.2"/><line x1="128.0" y1="68.1" x2="134.2" y2="71.4" stroke="#111" stroke-width="2.2"/><line x1="123.0" y1="76.8" x2="128.9" y2="80.5" stroke="#111" stroke-width="2.2"/><line x1="117.3" y1="85.2" x2="123.0" y2="89.3" stroke="#111" stroke-width="2.2"/><line x1="108.0" y1="90.6" x2="117.2" y2="98.3" stroke="#111" stroke-width="3.4"/><line x1="104.3" y1="100.7" x2="109.3" y2="105.6" stroke="#111" stroke-width="2.2"/><line x1="97.0" y1="107.8" x2="101.7" y2="113.0" stroke="#111" stroke-width="2.2"/><line x1="89.3" y1="114.3" x2="93.6" y2="119.8" stroke="#111" stroke-width="2.2"/><line x1="81.1" y1="120.2" x2="85.0" y2="126.0" stroke="#111" stroke-width="2.2"/><line x1="70.5" y1="122.1" x2="76.5" y2="132.5" stroke="#111" stroke-width="3.4"/><text transform="translate(-60.0,114.4) scale(1.0,1)" font-family="Liberation Sans" font-weight="bold" font-size="23.5" text-anchor="middle" fill="#0a0a0a">-40</text><text transform="translate(-91.0,87.4) scale(1.0,1)" font-family="Liberation Sans" font-weight="bold" font-size="23.5" text-anchor="middle" fill="#0a0a0a">-30</text><text transform="translate(-111.0,51.4) scale(1.0,1)" font-family="Liberation Sans" font-weight="bold" font-size="23.5" text-anchor="middle" fill="#0a0a0a">-20</text><text transform="translate(-121.0,8.4) scale(1.0,1)" font-family="Liberation Sans" font-weight="bold" font-size="23.5" text-anchor="middle" fill="#0a0a0a">-10</text><text transform="translate(113.0,53.4) scale(1.0,1)" font-family="Liberation Sans" font-weight="bold" font-size="23.5" text-anchor="middle" fill="#0a0a0a">90</text><text transform="translate(89.0,87.4) scale(1.0,1)" font-family="Liberation Sans" font-weight="bold" font-size="23.5" text-anchor="middle" fill="#0a0a0a">100</text><text transform="translate(59.0,114.4) scale(1.0,1)" font-family="Liberation Sans" font-weight="bold" font-size="23.5" text-anchor="middle" fill="#0a0a0a">110</text><text transform="translate(123.0,8.4) scale(1.0,1)" font-family="Liberation Sans" font-weight="bold" font-size="23.5" text-anchor="middle" fill="#0a0a0a">80</text><text transform="translate(0.0,67.6) scale(1.0,1)" font-family="Liberation Sans" font-weight="bold" font-size="24" text-anchor="middle" fill="#0a0a0a">50</text><text transform="translate(0.0,91.7) scale(1.0,1)" font-family="Liberation Sans" font-weight="bold" font-size="21.5" text-anchor="middle" fill="#0a0a0a">°C</text><path d="M-10 8 L-16 24 L-2 12Z" fill="#d8283a"/><circle cx="0" cy="0" r="23" fill="#0a0a0a"/><path d="M-16 -13 L15 15" stroke="#666" stroke-width="2.5" opacity="0.55"/></svg>
<div class="a" style="left:5px;top:908px;width:154px;height:23px;background:#fbfbfb;border-right:2px solid #a8a8a8;border-bottom:2px solid #a8a8a8"></div>
<div class="t" style="left:5px;top:910px;width:152px;text-align:center;font-size:18.25px;color:#111">TPS Decel</div>
<div class="a" style="left:5px;top:934px;width:154px;height:23px;background:#fbfbfb;border-right:2px solid #a8a8a8;border-bottom:2px solid #a8a8a8"></div>
<div class="t" style="left:5px;top:936px;width:152px;text-align:center;font-size:18.25px;color:#111">N2O 1</div>
<div class="a" style="left:5px;top:959px;width:154px;height:23px;background:#fbfbfb;border-right:2px solid #a8a8a8;border-bottom:2px solid #a8a8a8"></div>
<div class="t" style="left:5px;top:961px;width:152px;text-align:center;font-size:18.25px;color:#111">Over boost</div>
<div class="a" style="left:165px;top:908px;width:154px;height:23px;background:#fbfbfb;border-right:2px solid #a8a8a8;border-bottom:2px solid #a8a8a8"></div>
<div class="t" style="left:165px;top:910px;width:152px;text-align:center;font-size:18.25px;color:#111">Flat shift</div>
<div class="a" style="left:165px;top:934px;width:154px;height:23px;background:#fbfbfb;border-right:2px solid #a8a8a8;border-bottom:2px solid #a8a8a8"></div>
<div class="t" style="left:165px;top:936px;width:152px;text-align:center;font-size:18.25px;color:#111">Knock</div>
<div class="a" style="left:165px;top:959px;width:154px;height:23px;background:#fbfbfb;border-right:2px solid #a8a8a8;border-bottom:2px solid #a8a8a8"></div>
<div class="t" style="left:165px;top:961px;width:152px;text-align:center;font-size:18.25px;color:#111">Test mode</div>
<div class="a" style="left:324px;top:908px;width:154px;height:23px;background:#10e010;border-right:2px solid #0a9a0a;border-bottom:2px solid #0a9a0a"></div>
<div class="t" style="left:324px;top:910px;width:152px;text-align:center;font-size:18.25px;color:#2a2a2a">Full-RPM sync</div>
<div class="a" style="left:324px;top:934px;width:154px;height:23px;background:#fbfbfb;border-right:2px solid #a8a8a8;border-bottom:2px solid #a8a8a8"></div>
<div class="t" style="left:324px;top:936px;width:152px;text-align:center;font-size:18.25px;color:#111">MAP Accel Enrich</div>
<div class="a" style="left:324px;top:959px;width:154px;height:23px;background:#fbfbfb;border-right:2px solid #a8a8a8;border-bottom:2px solid #a8a8a8"></div>
<div class="t" style="left:324px;top:961px;width:152px;text-align:center;font-size:18.25px;color:#111">Spark cut</div>
<div class="a" style="left:484px;top:908px;width:154px;height:23px;background:#fbfbfb;border-right:2px solid #a8a8a8;border-bottom:2px solid #a8a8a8"></div>
<div class="t" style="left:484px;top:910px;width:152px;text-align:center;font-size:18.25px;color:#111">CL idle</div>
<div class="a" style="left:484px;top:934px;width:154px;height:23px;background:#fbfbfb;border-right:2px solid #a8a8a8;border-bottom:2px solid #a8a8a8"></div>
<div class="t" style="left:484px;top:936px;width:152px;text-align:center;font-size:18.25px;color:#111">No seq. shift</div>
<div class="a" style="left:484px;top:959px;width:154px;height:23px;background:#fbfbfb;border-right:2px solid #a8a8a8;border-bottom:2px solid #a8a8a8"></div>
<div class="t" style="left:484px;top:961px;width:152px;text-align:center;font-size:18.25px;color:#111">MAPsample error!</div>
<div class="a" style="left:644px;top:908px;width:154px;height:23px;background:#fbfbfb;border-right:2px solid #a8a8a8;border-bottom:2px solid #a8a8a8"></div>
<div class="t" style="left:644px;top:910px;width:152px;text-align:center;font-size:18.25px;color:#111">ASE OFF</div>
<div class="a" style="left:644px;top:934px;width:154px;height:23px;background:#10e010;border-right:2px solid #0a9a0a;border-bottom:2px solid #0a9a0a"></div>
<div class="t" style="left:644px;top:936px;width:152px;text-align:center;font-size:18.25px;color:#2a2a2a">RPM Synced</div>
<div class="a" style="left:644px;top:959px;width:154px;height:23px;background:#fbfbfb;border-right:2px solid #a8a8a8;border-bottom:2px solid #a8a8a8"></div>
<div class="t" style="left:644px;top:961px;width:152px;text-align:center;font-size:18.25px;color:#111">Fuel Tbl sw</div>
<div class="a" style="left:804px;top:908px;width:154px;height:23px;background:#fbfbfb;border-right:2px solid #a8a8a8;border-bottom:2px solid #a8a8a8"></div>
<div class="t" style="left:804px;top:910px;width:152px;text-align:center;font-size:18.25px;color:#111">Lost Data</div>
<div class="a" style="left:804px;top:934px;width:154px;height:23px;background:#fbfbfb;border-right:2px solid #a8a8a8;border-bottom:2px solid #a8a8a8"></div>
<div class="t" style="left:804px;top:936px;width:152px;text-align:center;font-size:18.25px;color:#111">AC</div>
<div class="a" style="left:804px;top:959px;width:154px;height:23px;background:#fbfbfb;border-right:2px solid #a8a8a8;border-bottom:2px solid #a8a8a8"></div>
<div class="t" style="left:804px;top:961px;width:152px;text-align:center;font-size:18.25px;color:#111">Config Error</div>
<div class="a" style="left:963px;top:908px;width:154px;height:23px;background:#10e010;border-right:2px solid #0a9a0a;border-bottom:2px solid #0a9a0a"></div>
<div class="t" style="left:963px;top:910px;width:152px;text-align:center;font-size:18.25px;color:#2a2a2a">TPS Accel Enrich</div>
<div class="a" style="left:963px;top:934px;width:154px;height:23px;background:#fbfbfb;border-right:2px solid #a8a8a8;border-bottom:2px solid #a8a8a8"></div>
<div class="t" style="left:963px;top:936px;width:152px;text-align:center;font-size:18.25px;color:#111">WUE OFF</div>
<div class="a" style="left:963px;top:959px;width:154px;height:23px;background:#fbfbfb;border-right:2px solid #a8a8a8;border-bottom:2px solid #a8a8a8"></div>
<div class="t" style="left:963px;top:961px;width:152px;text-align:center;font-size:18.25px;color:#111">No soft limit</div>
<div class="a" style="left:1123px;top:908px;width:154px;height:23px;background:#fbfbfb;border-right:2px solid #a8a8a8;border-bottom:2px solid #a8a8a8"></div>
<div class="t" style="left:1123px;top:910px;width:152px;text-align:center;font-size:18.25px;color:#111">Need Burn</div>
<div class="a" style="left:1123px;top:934px;width:154px;height:23px;background:#fbfbfb;border-right:2px solid #a8a8a8;border-bottom:2px solid #a8a8a8"></div>
<div class="t" style="left:1123px;top:936px;width:152px;text-align:center;font-size:18.25px;color:#111">Not Cranking</div>
<div class="a" style="left:1123px;top:959px;width:154px;height:23px;background:#10e010;border-right:2px solid #0a9a0a;border-bottom:2px solid #0a9a0a"></div>
<div class="t" style="left:1123px;top:961px;width:152px;text-align:center;font-size:18.25px;color:#2a2a2a">Data Logging</div>
<div class="a" style="left:1283px;top:908px;width:154px;height:23px;background:#fbfbfb;border-right:2px solid #a8a8a8;border-bottom:2px solid #a8a8a8"></div>
<div class="t" style="left:1283px;top:910px;width:152px;text-align:center;font-size:18.25px;color:#111">T-log</div>
<div class="a" style="left:1283px;top:934px;width:154px;height:23px;background:#fbfbfb;border-right:2px solid #a8a8a8;border-bottom:2px solid #a8a8a8"></div>
<div class="t" style="left:1283px;top:936px;width:152px;text-align:center;font-size:18.25px;color:#111">Spk Tbl sw</div>
<div class="a" style="left:1283px;top:959px;width:154px;height:23px;background:#fbfbfb;border-right:2px solid #a8a8a8;border-bottom:2px solid #a8a8a8"></div>
<div class="a" style="left:1442px;top:908px;width:154px;height:23px;background:#fbfbfb;border-right:2px solid #a8a8a8;border-bottom:2px solid #a8a8a8"></div>
<div class="t" style="left:1442px;top:910px;width:152px;text-align:center;font-size:18.25px;color:#111">MAP Decel</div>
<div class="a" style="left:1442px;top:934px;width:154px;height:23px;background:#fbfbfb;border-right:2px solid #a8a8a8;border-bottom:2px solid #a8a8a8"></div>
<div class="t" style="left:1442px;top:936px;width:152px;text-align:center;font-size:18.25px;color:#111">Launch</div>
<div class="a" style="left:1442px;top:959px;width:154px;height:23px;background:#fbfbfb;border-right:2px solid #a8a8a8;border-bottom:2px solid #a8a8a8"></div>
<div class="t" style="left:1442px;top:961px;width:152px;text-align:center;font-size:18.25px;color:#b8b8b8">Not Connected</div>
<div class="a" style="left:1602px;top:908px;width:154px;height:23px;background:#fbfbfb;border-right:2px solid #a8a8a8;border-bottom:2px solid #a8a8a8"></div>
<div class="t" style="left:1602px;top:910px;width:152px;text-align:center;font-size:18.25px;color:#111">N2O 2</div>
<div class="a" style="left:1602px;top:934px;width:154px;height:23px;background:#fbfbfb;border-right:2px solid #a8a8a8;border-bottom:2px solid #a8a8a8"></div>
<div class="t" style="left:1602px;top:936px;width:152px;text-align:center;font-size:18.25px;color:#111">Hard limit</div>
<div class="a" style="left:1602px;top:959px;width:154px;height:23px;background:#fbfbfb;border-right:2px solid #a8a8a8;border-bottom:2px solid #a8a8a8"></div>
<div class="t" style="left:1602px;top:961px;width:152px;text-align:center;font-size:18.25px;color:#b8b8b8">Protocol Error</div>
<div class="a" style="left:1762px;top:908px;width:154px;height:23px;background:#fbfbfb;border-right:2px solid #a8a8a8;border-bottom:2px solid #a8a8a8"></div>
<div class="t" style="left:1762px;top:910px;width:152px;text-align:center;font-size:18.25px;color:#111">No Fuel cut</div>
<div class="a" style="left:1762px;top:934px;width:154px;height:23px;background:#10e010;border-right:2px solid #0a9a0a;border-bottom:2px solid #0a9a0a"></div>
<div class="t" style="left:1762px;top:936px;width:152px;text-align:center;font-size:18.25px;color:#2a2a2a">Ready</div>
<div class="a" style="left:0;top:985px;width:1920px;height:5px;background:linear-gradient(#c8d8e8 0,#dce6f0 55%,#8a9cb0 60%,#8a9cb0 100%)"></div>
<div class="a" style="left:0;top:990px;width:1920px;height:30px;background:#eeeeee"></div>
<div class="t b" style="left:4px;top:996px;font-size:18px;color:#333">Capturing DataLog</div>
<div class="a" style="left:487px;top:991px;width:650px;height:26px;border:1px solid #555;background:#eef6fc"></div>
<div class="a" style="left:490px;top:994px;width:645px;height:20px;background:linear-gradient(#0a78f8,#0a70f0 85%,#0858c0)"></div>
<div class="a" style="left:483px;top:990px;width:1px;height:30px;background:#fafafa"></div>
<div class="a" style="left:1140px;top:992px;width:1px;height:26px;background:#c0c0c0"></div>
<div class="t" style="left:1145px;top:996px;font-size:17.6px;color:#333">Android Dash...</div>
<div class="t" style="left:1276px;top:996px;font-size:18px;color:#2424c4;text-decoration:line-through">Learn More!</div>
<div class="a" style="left:1382px;top:992px;width:1px;height:26px;background:#c0c0c0"></div>
<div class="t b" style="left:1385px;top:996px;font-size:18.3px;color:#333">CurrentTune.msq</div>
<div class="a" style="left:1868px;top:992px;width:1px;height:26px;background:#c0c0c0"></div>
<div class="a" style="left:1873px;top:1000px;width:10px;height:9px;border-radius:50%;background:#a01010"></div>
<div class="a" style="left:1882px;top:1000px;width:10px;height:9px;border-radius:50%;background:#109010"></div>
<div class="a" style="left:20px;top:120px;width:315px;height:484px;background:#eeeeee;border:1px solid #98a8c0"></div>
<svg class="a" style="left:26px;top:128px" width="17" height="18" viewBox="0 0 17 18"><rect x="2" y="3" width="8" height="11" fill="#f4f0d8" stroke="#d0c8a0" stroke-width="0.8"/><rect x="5" y="2" width="8" height="11" fill="#5a9ae0" stroke="#3a70b8" stroke-width="0.6" opacity="0.9"/><rect x="6" y="3" width="5" height="4" fill="#c8e4fc"/><path d="M5 13 Q7 11 9 13 L12 14 Q14 12 15 14 M5 16 Q7 17 9 15 L12 14 Q14 16 15 15" stroke="#8a9098" stroke-width="1.2" fill="none"/></svg>
<div class="t b" style="left:47px;top:129px;font-size:18.4px;color:#2b2b2b">Engine and Sequential Settings</div>
<svg class="a" style="left:26px;top:157px" width="17" height="18" viewBox="0 0 17 18"><rect x="2" y="3" width="8" height="11" fill="#f4f0d8" stroke="#d0c8a0" stroke-width="0.8"/><rect x="5" y="2" width="8" height="11" fill="#5a9ae0" stroke="#3a70b8" stroke-width="0.6" opacity="0.9"/><rect x="6" y="3" width="5" height="4" fill="#c8e4fc"/><path d="M5 13 Q7 11 9 13 L12 14 Q14 12 15 14 M5 16 Q7 17 9 15 L12 14 Q14 16 15 15" stroke="#8a9098" stroke-width="1.2" fill="none"/></svg>
<div class="t b" style="left:47px;top:158px;font-size:18.4px;color:#2b2b2b">General Settings</div>
<div class="a" style="left:27px;top:190px;width:16px;height:13px;background:repeating-linear-gradient(90deg,#1a1a1a 0 3px,transparent 3px 4px)"></div>
<div class="a" style="left:27px;top:196px;width:16px;height:2px;background:#c01010;transform:rotate(-20deg)"></div>
<div class="t b" style="left:47px;top:187px;font-size:18.4px;color:#2b2b2b">Rev Limiter</div>
<div class="a" style="left:21px;top:212px;width:313px;height:1px;background:#a0b0c8"></div>
<div class="a" style="left:21px;top:213px;width:313px;height:1px;background:#fafafa"></div>
<svg class="a" style="left:26px;top:219px" width="17" height="18" viewBox="0 0 17 18"><rect x="2" y="3" width="8" height="11" fill="#f4f0d8" stroke="#d0c8a0" stroke-width="0.8"/><rect x="5" y="2" width="8" height="11" fill="#5a9ae0" stroke="#3a70b8" stroke-width="0.6" opacity="0.9"/><rect x="6" y="3" width="5" height="4" fill="#c8e4fc"/><path d="M5 13 Q7 11 9 13 L12 14 Q14 12 15 14 M5 16 Q7 17 9 15 L12 14 Q14 16 15 15" stroke="#8a9098" stroke-width="1.2" fill="none"/></svg>
<div class="t b" style="left:47px;top:220px;font-size:18.4px;color:#2b2b2b">Tacho Output</div>
<div class="a" style="left:27px;top:252px;width:16px;height:13px;background:repeating-linear-gradient(90deg,#1a1a1a 0 3px,transparent 3px 4px)"></div>
<div class="a" style="left:27px;top:258px;width:16px;height:2px;background:#c01010;transform:rotate(-20deg)"></div>
<div class="t b" style="left:47px;top:249px;font-size:18.4px;color:#2b2b2b">Barometric Correction</div>
<svg class="a" style="left:26px;top:277px" width="17" height="18" viewBox="0 0 17 18"><rect x="2" y="3" width="8" height="11" fill="#f4f0d8" stroke="#d0c8a0" stroke-width="0.8"/><rect x="5" y="2" width="8" height="11" fill="#5a9ae0" stroke="#3a70b8" stroke-width="0.6" opacity="0.9"/><rect x="6" y="3" width="5" height="4" fill="#c8e4fc"/><path d="M5 13 Q7 11 9 13 L12 14 Q14 12 15 14 M5 16 Q7 17 9 15 L12 14 Q14 16 15 15" stroke="#8a9098" stroke-width="1.2" fill="none"/></svg>
<div class="t b" style="left:47px;top:278px;font-size:18.4px;color:#2b2b2b">MAP Sample Settings</div>
<div class="a" style="left:21px;top:302px;width:313px;height:1px;background:#a0b0c8"></div>
<div class="a" style="left:21px;top:303px;width:313px;height:1px;background:#fafafa"></div>
<div class="a" style="left:27px;top:314px;width:16px;height:13px;background:repeating-linear-gradient(90deg,#c8c8c8 0 3px,transparent 3px 4px)"></div>
<div class="t b" style="left:47px;top:311px;font-size:18.4px;color:#a8a8a8">ITB Load Settings</div>
<svg class="a" style="left:26px;top:339px" width="17" height="18" viewBox="0 0 17 18"><rect x="2" y="3" width="8" height="11" fill="#f4f0d8" stroke="#d0c8a0" stroke-width="0.8"/><rect x="5" y="2" width="8" height="11" fill="#5a9ae0" stroke="#3a70b8" stroke-width="0.6" opacity="0.9"/><rect x="6" y="3" width="5" height="4" fill="#c8e4fc"/><path d="M5 13 Q7 11 9 13 L12 14 Q14 12 15 14 M5 16 Q7 17 9 15 L12 14 Q14 16 15 15" stroke="#8a9098" stroke-width="1.2" fill="none"/></svg>
<div class="t b" style="left:47px;top:340px;font-size:18.4px;color:#2b2b2b">MAF Settings</div>
<div class="a" style="left:27px;top:372px;width:16px;height:13px;background:repeating-linear-gradient(90deg,#c8c8c8 0 3px,transparent 3px 4px)"></div>
<div class="t b" style="left:47px;top:369px;font-size:18.4px;color:#a8a8a8">MAF Flow Curve</div>
<div class="a" style="left:27px;top:401px;width:16px;height:13px;background:repeating-linear-gradient(90deg,#c8c8c8 0 3px,transparent 3px 4px)"></div>
<div class="t b" style="left:47px;top:398px;font-size:18.4px;color:#a8a8a8">MAF Correction Table (Old)</div>
<div class="a" style="left:27px;top:430px;width:16px;height:13px;background:repeating-linear-gradient(90deg,#c8c8c8 0 3px,transparent 3px 4px)"></div>
<div class="t b" style="left:47px;top:427px;font-size:18.4px;color:#a8a8a8">MAF/MAT Correction Table</div>
<div class="a" style="left:21px;top:452px;width:313px;height:1px;background:#a0b0c8"></div>
<div class="a" style="left:21px;top:453px;width:313px;height:1px;background:#fafafa"></div>
<div class="a" style="left:27px;top:463px;width:16px;height:13px;background:repeating-linear-gradient(90deg,#1a1a1a 0 3px,transparent 3px 4px)"></div>
<div class="a" style="left:27px;top:469px;width:16px;height:2px;background:#c01010;transform:rotate(-20deg)"></div>
<div class="t b" style="left:47px;top:460px;font-size:18.4px;color:#2b2b2b">MAT Air Density Table</div>
<div class="a" style="left:27px;top:492px;width:16px;height:13px;background:repeating-linear-gradient(90deg,#1a1a1a 0 3px,transparent 3px 4px)"></div>
<div class="a" style="left:27px;top:498px;width:16px;height:2px;background:#c01010;transform:rotate(-20deg)"></div>
<div class="t b" style="left:47px;top:489px;font-size:18.4px;color:#2b2b2b">MAT/CLT Correction</div>
<div class="a" style="left:21px;top:513px;width:313px;height:1px;background:#a0b0c8"></div>
<div class="a" style="left:21px;top:514px;width:313px;height:1px;background:#fafafa"></div>
<svg class="a" style="left:26px;top:521px" width="17" height="18" viewBox="0 0 17 18"><rect x="2" y="3" width="8" height="11" fill="#f4f0d8" stroke="#d0c8a0" stroke-width="0.8"/><rect x="5" y="2" width="8" height="11" fill="#5a9ae0" stroke="#3a70b8" stroke-width="0.6" opacity="0.9"/><rect x="6" y="3" width="5" height="4" fill="#c8e4fc"/><path d="M5 13 Q7 11 9 13 L12 14 Q14 12 15 14 M5 16 Q7 17 9 15 L12 14 Q14 16 15 15" stroke="#8a9098" stroke-width="1.2" fill="none"/></svg>
<div class="t b" style="left:47px;top:522px;font-size:18.4px;color:#2b2b2b"><span class="u">R</span>eal-Time Display</div>
<svg class="a" style="left:26px;top:550px" width="17" height="18" viewBox="0 0 17 18"><rect x="2" y="3" width="8" height="11" fill="#f4f0d8" stroke="#d0c8a0" stroke-width="0.8"/><rect x="5" y="2" width="8" height="11" fill="#5a9ae0" stroke="#3a70b8" stroke-width="0.6" opacity="0.9"/><rect x="6" y="3" width="5" height="4" fill="#c8e4fc"/><path d="M5 13 Q7 11 9 13 L12 14 Q14 12 15 14 M5 16 Q7 17 9 15 L12 14 Q14 16 15 15" stroke="#8a9098" stroke-width="1.2" fill="none"/></svg>
<div class="t b" style="left:47px;top:551px;font-size:18.4px;color:#2b2b2b">Feature List Showing I/O Pins</div>
<svg class="a" style="left:26px;top:579px" width="17" height="18" viewBox="0 0 17 18"><rect x="2" y="3" width="8" height="11" fill="#f4f0d8" stroke="#d0c8a0" stroke-width="0.8"/><rect x="5" y="2" width="8" height="11" fill="#5a9ae0" stroke="#3a70b8" stroke-width="0.6" opacity="0.9"/><rect x="6" y="3" width="5" height="4" fill="#c8e4fc"/><path d="M5 13 Q7 11 9 13 L12 14 Q14 12 15 14 M5 16 Q7 17 9 15 L12 14 Q14 16 15 15" stroke="#8a9098" stroke-width="1.2" fill="none"/></svg>
<div class="t b" style="left:47px;top:580px;font-size:18.4px;color:#2b2b2b">Gauge and Settings Limits</div>
<div class="a" style="left:460px;top:49px;width:1460px;height:1px;background:#9a9a9a"></div>
<div class="a" style="left:460px;top:50px;width:1460px;height:678px;background:#eeeeee"></div>
<div class="a" style="left:460px;top:50px;width:1460px;height:43px;background:#fdfdfd"></div>
<svg class="a" style="left:469px;top:56px" width="26" height="28" viewBox="0 0 26 28"><defs><linearGradient id="tsg" x1="0" y1="0" x2="0" y2="1"><stop offset="0" stop-color="#c8e4fc"/><stop offset="1" stop-color="#3a7ed0"/></linearGradient></defs><rect x="3" y="6" width="13" height="18" fill="#f8f0c0" stroke="#b8a050" stroke-width="1.2"/><rect x="6" y="8" width="13" height="16" fill="url(#tsg)" stroke="#3a70b8" stroke-width="0.8"/><text x="12.5" y="16" font-family="Liberation Sans" font-weight="bold" font-size="6" text-anchor="middle" fill="#0a3a80">101</text><path d="M9 21 Q11 18 14 21 L19 23 Q22 20 24 22 M9 25 Q11 27 14 24 L19 23 Q22 26 24 25" stroke="#808890" stroke-width="1.6" fill="none"/></svg>
<div class="t" style="left:500px;top:63px;font-size:18.5px;letter-spacing:-0.45px;color:#9a9a9a">Ignition Table 1 (Spark Advance)</div>
<div class="a" style="left:460px;top:93px;width:1460px;height:30px;background:linear-gradient(#fdfdfd,#f8f8f8 25%,#ececec 75%,#e2e2e2)"></div>
<div class="a" style="left:460px;top:123px;width:1460px;height:1px;background:#cdcdcd"></div>
<div class="t b" style="left:466px;top:100px;font-size:18px;color:#222"><span class="u">V</span>iew</div>
<div class="t b" style="left:523px;top:100px;font-size:17.6px;color:#222"><span class="u">H</span>elp</div>
<div class="a" style="left:488px;top:126px;width:1432px;height:48px;background:linear-gradient(#fbfbfb,#f2f2f2 40%,#e4e4e4)"></div>
<div class="a" style="left:461px;top:143px;width:17px;height:18px;border-radius:4px;background:#0a52b8"></div>
<div class="t b" style="left:464px;top:143px;font-size:16px;color:#c8f0ff">?</div>
<div class="a" style="left:1401px;top:130px;width:42px;height:43px;border:1px solid #98a4b2;background:linear-gradient(#f6f8fa,#e6ecf2 50%,#c8d6e4)"></div>
<div class="a" style="left:1410px;top:139px;width:24px;height:24px;border-radius:50%;background:radial-gradient(circle at 40% 40%,#b8f0a0,#58c040 70%,#3a9a2a)"></div>
<svg class="a" style="left:1410px;top:139px" width="24" height="24"><path d="M12 5L6 12H10V19H14V12H18Z" fill="#f4fff0"/></svg>
<div class="a" style="left:1448px;top:130px;width:42px;height:43px;border:1px solid #98a4b2;background:linear-gradient(#f6f8fa,#e6ecf2 50%,#c8d6e4)"></div>
<div class="a" style="left:1457px;top:139px;width:24px;height:24px;border-radius:50%;background:radial-gradient(circle at 40% 40%,#b8f0a0,#58c040 70%,#3a9a2a)"></div>
<svg class="a" style="left:1457px;top:139px" width="24" height="24"><path d="M12 19L6 12H10V5H14V12H18Z" fill="#f4fff0"/></svg>
<div class="a" style="left:1495px;top:130px;width:42px;height:43px;border:1px solid #98a4b2;background:linear-gradient(#f6f8fa,#e6ecf2 50%,#c8d6e4)"></div>
<div class="a" style="left:1504px;top:139px;width:24px;height:24px;border-radius:50%;background:#0a0a0a"></div>
<div class="a" style="left:1509px;top:147px;width:14px;height:3px;background:#fff"></div><div class="a" style="left:1509px;top:152px;width:14px;height:3px;background:#fff"></div>
<div class="a" style="left:1542px;top:130px;width:42px;height:43px;border:1px solid #98a4b2;background:linear-gradient(#f6f8fa,#e6ecf2 50%,#c8d6e4)"></div>
<div class="a" style="left:1551px;top:139px;width:24px;height:24px;border-radius:3px;background:#0a0a0a"></div>
<svg class="a" style="left:1551px;top:139px" width="24" height="24"><path d="M12 4L5 11M12 4L19 11M12 4V20" stroke="#fff" stroke-width="2.5" fill="none"/></svg>
<div class="a" style="left:1589px;top:130px;width:42px;height:43px;border:1px solid #98a4b2;background:linear-gradient(#f6f8fa,#e6ecf2 50%,#c8d6e4)"></div>
<div class="a" style="left:1598px;top:139px;width:24px;height:24px;border-radius:3px;background:#0a0a0a"></div>
<svg class="a" style="left:1598px;top:139px" width="24" height="24"><path d="M12 20L5 13M12 20L19 13M12 20V4" stroke="#fff" stroke-width="2.5" fill="none"/></svg>
<div class="a" style="left:1636px;top:130px;width:42px;height:43px;border:1px solid #98a4b2;background:linear-gradient(#f6f8fa,#e6ecf2 50%,#c8d6e4)"></div>
<div class="a" style="left:1645px;top:139px;width:24px;height:24px;border-radius:50%;background:#0a0a0a"></div>
<div class="a" style="left:1649px;top:149px;width:16px;height:4px;background:#fff"></div>
<div class="a" style="left:1683px;top:130px;width:42px;height:43px;border:1px solid #98a4b2;background:linear-gradient(#f6f8fa,#e6ecf2 50%,#c8d6e4)"></div>
<div class="a" style="left:1692px;top:139px;width:24px;height:24px;border-radius:50%;background:#0a0a0a"></div>
<div class="a" style="left:1696px;top:149px;width:16px;height:4px;background:#fff"></div><div class="a" style="left:1702px;top:143px;width:4px;height:16px;background:#fff"></div>
<div class="a" style="left:1730px;top:130px;width:42px;height:43px;border:1px solid #98a4b2;background:linear-gradient(#f6f8fa,#e6ecf2 50%,#c8d6e4)"></div>
<div class="a" style="left:1739px;top:139px;width:24px;height:24px;border-radius:50%;background:#0a0a0a"></div>
<svg class="a" style="left:1743px;top:143px" width="16" height="16"><path d="M2 2L14 14M14 2L2 14" stroke="#fff" stroke-width="3.5"/></svg>
<div class="a" style="left:1777px;top:130px;width:42px;height:43px;border:1px solid #98a4b2;background:linear-gradient(#f6f8fa,#e6ecf2 50%,#c8d6e4)"></div>
<svg class="a" style="left:1788px;top:141px" width="20" height="20"><path d="M3 17L10 10" stroke="#e02020" stroke-width="3.5"/><path d="M10 10L17 3" stroke="#2030e0" stroke-width="3.5"/></svg>
<div class="a" style="left:1824px;top:130px;width:42px;height:43px;border:1px solid #98a4b2;background:linear-gradient(#f6f8fa,#e6ecf2 50%,#c8d6e4)"></div>
<div class="a" style="left:1832px;top:139px;width:26px;height:24px;background:repeating-linear-gradient(180deg,#c0c0c0 0 4px,transparent 4px 7px)"></div>
<div class="a" style="left:1871px;top:130px;width:42px;height:43px;border:1px solid #98a4b2;background:linear-gradient(#f6f8fa,#e6ecf2 50%,#c8d6e4)"></div>
<div class="a" style="left:1880px;top:139px;width:24px;height:24px;background:repeating-linear-gradient(90deg,#c0c0c0 0 5px,transparent 5px 9px)"></div>
<div class="t b" style="left:464px;top:280.0px;width:14px;text-align:center;font-size:17px;color:#2a2a2a">i</div>
<div class="t b" style="left:464px;top:303.2px;width:14px;text-align:center;font-size:17px;color:#2a2a2a">g</div>
<div class="t b" style="left:464px;top:326.4px;width:14px;text-align:center;font-size:17px;color:#2a2a2a">n</div>
<div class="t b" style="left:464px;top:349.6px;width:14px;text-align:center;font-size:17px;color:#2a2a2a">l</div>
<div class="t b" style="left:464px;top:372.8px;width:14px;text-align:center;font-size:17px;color:#2a2a2a">o</div>
<div class="t b" style="left:464px;top:396.0px;width:14px;text-align:center;font-size:17px;color:#2a2a2a">a</div>
<div class="t b" style="left:464px;top:419.2px;width:14px;text-align:center;font-size:17px;color:#2a2a2a">d</div>
<div class="t b" style="left:464px;top:464.0px;width:14px;text-align:center;font-size:17px;color:#2a2a2a">k</div>
<div class="t b" style="left:464px;top:487.5px;width:14px;text-align:center;font-size:17px;color:#2a2a2a">P</div>
<div class="t b" style="left:464px;top:511.0px;width:14px;text-align:center;font-size:17px;color:#2a2a2a">a</div>
<div class="t b" style="left:1196px;top:650px;font-size:19px;color:#333">rpm</div>
<div class="a" style="left:489px;top:176px;width:114px;height:36px;background:linear-gradient(#ececf2,#dcdce6);border-bottom:2px solid #8a8a8a;border-right:2px solid #747474"></div>
<div class="t b" style="left:489px;top:177px;width:114px;text-align:center;font-size:33.5px;color:#0a0a0a">100.0</div>
<div class="a" style="left:489px;top:212px;width:114px;height:36px;background:linear-gradient(#ececf2,#dcdce6);border-bottom:2px solid #8a8a8a;border-right:2px solid #747474"></div>
<div class="t b" style="left:489px;top:213px;width:114px;text-align:center;font-size:33.5px;color:#0a0a0a">90.0</div>
<div class="a" style="left:489px;top:248px;width:114px;height:36px;background:linear-gradient(90deg,#bdbdbd,#d4d4d4 50%,#c2c2c6);border-bottom:2px solid #8a8a8a;border-right:2px solid #747474"></div>
<div class="t b" style="left:489px;top:249px;width:114px;text-align:center;font-size:33.5px;color:#0a0a0a">80.0</div>
<div class="a" style="left:489px;top:284px;width:114px;height:36px;background:linear-gradient(90deg,#bdbdbd,#d4d4d4 50%,#c2c2c6);border-bottom:2px solid #8a8a8a;border-right:2px solid #747474"></div>
<div class="t b" style="left:489px;top:285px;width:114px;text-align:center;font-size:33.5px;color:#0a0a0a">70.0</div>
<div class="a" style="left:489px;top:320px;width:114px;height:36px;background:linear-gradient(90deg,#bdbdbd,#d4d4d4 50%,#c2c2c6);border-bottom:2px solid #8a8a8a;border-right:2px solid #747474"></div>
<div class="t b" style="left:489px;top:321px;width:114px;text-align:center;font-size:33.5px;color:#0a0a0a">60.0</div>
<div class="a" style="left:489px;top:356px;width:114px;height:36px;background:linear-gradient(90deg,#bdbdbd,#d4d4d4 50%,#c2c2c6);border-bottom:2px solid #8a8a8a;border-right:2px solid #747474"></div>
<div class="t b" style="left:489px;top:357px;width:114px;text-align:center;font-size:33.5px;color:#0a0a0a">50.0</div>
<div class="a" style="left:489px;top:392px;width:114px;height:36px;background:linear-gradient(90deg,#bdbdbd,#d4d4d4 50%,#c2c2c6);border-bottom:2px solid #8a8a8a;border-right:2px solid #747474"></div>
<div class="t b" style="left:489px;top:393px;width:114px;text-align:center;font-size:33.5px;color:#0a0a0a">45.0</div>
<div class="a" style="left:489px;top:428px;width:114px;height:36px;background:linear-gradient(90deg,#bdbdbd,#d4d4d4 50%,#c2c2c6);border-bottom:2px solid #8a8a8a;border-right:2px solid #747474"></div>
<div class="t b" style="left:489px;top:429px;width:114px;text-align:center;font-size:33.5px;color:#0a0a0a">40.0</div>
<div class="a" style="left:489px;top:464px;width:114px;height:36px;background:linear-gradient(90deg,#bdbdbd,#d4d4d4 50%,#c2c2c6);border-bottom:2px solid #8a8a8a;border-right:2px solid #747474"></div>
<div class="t b" style="left:489px;top:465px;width:114px;text-align:center;font-size:33.5px;color:#0a0a0a">35.0</div>
<div class="a" style="left:489px;top:500px;width:114px;height:36px;background:linear-gradient(90deg,#bdbdbd,#d4d4d4 50%,#c2c2c6);border-bottom:2px solid #8a8a8a;border-right:2px solid #747474"></div>
<div class="t b" style="left:489px;top:501px;width:114px;text-align:center;font-size:33.5px;color:#0a0a0a">30.0</div>
<div class="a" style="left:489px;top:536px;width:114px;height:36px;background:linear-gradient(90deg,#bdbdbd,#d4d4d4 50%,#c2c2c6);border-bottom:2px solid #8a8a8a;border-right:2px solid #747474"></div>
<div class="t b" style="left:489px;top:537px;width:114px;text-align:center;font-size:33.5px;color:#0a0a0a">25.0</div>
<div class="a" style="left:489px;top:572px;width:114px;height:36px;background:linear-gradient(90deg,#bdbdbd,#d4d4d4 50%,#c2c2c6);border-bottom:2px solid #8a8a8a;border-right:2px solid #747474"></div>
<div class="t b" style="left:489px;top:573px;width:114px;text-align:center;font-size:33.5px;color:#0a0a0a">20.0</div>
<div class="a" style="left:603.0px;top:176px;width:113.2px;height:36px;background:#8282f2;border-right:1px solid #6a7890;border-bottom:1px solid #6a7890"></div>
<div class="t b" style="left:603.0px;top:177px;width:113.2px;text-align:center;font-size:33.5px;color:#dd0a0a">-5.0</div>
<div class="a" style="left:716.2px;top:176px;width:113.2px;height:36px;background:#8282f2;border-right:1px solid #6a7890;border-bottom:1px solid #6a7890"></div>
<div class="t b" style="left:716.2px;top:177px;width:113.2px;text-align:center;font-size:33.5px;color:#dd0a0a">-6.0</div>
<div class="a" style="left:829.4px;top:176px;width:113.2px;height:36px;background:#b9cce4;border-right:1px solid #6a7890;border-bottom:1px solid #6a7890"></div>
<div class="t b" style="left:829.4px;top:177px;width:113.2px;text-align:center;font-size:33.5px;color:#2e2e2e">3.5</div>
<div class="a" style="left:942.6px;top:176px;width:113.2px;height:36px;background:#b9cce4;border-right:1px solid #6a7890;border-bottom:1px solid #6a7890"></div>
<div class="t b" style="left:942.6px;top:177px;width:113.2px;text-align:center;font-size:33.5px;color:#2e2e2e">4.5</div>
<div class="a" style="left:1055.8px;top:176px;width:113.2px;height:36px;background:#b9cce4;border-right:1px solid #6a7890;border-bottom:1px solid #6a7890"></div>
<div class="t b" style="left:1055.8px;top:177px;width:113.2px;text-align:center;font-size:33.5px;color:#2e2e2e">5.5</div>
<div class="a" style="left:1169.0px;top:176px;width:113.2px;height:36px;background:#b9cce4;border-right:1px solid #6a7890;border-bottom:1px solid #6a7890"></div>
<div class="t b" style="left:1169.0px;top:177px;width:113.2px;text-align:center;font-size:33.5px;color:#2e2e2e">7.0</div>
<div class="a" style="left:1282.2px;top:176px;width:113.2px;height:36px;background:#b9cce4;border-right:1px solid #6a7890;border-bottom:1px solid #6a7890"></div>
<div class="t b" style="left:1282.2px;top:177px;width:113.2px;text-align:center;font-size:33.5px;color:#2e2e2e">7.5</div>
<div class="a" style="left:1395.4px;top:176px;width:113.2px;height:36px;background:#b9cce4;border-right:1px solid #6a7890;border-bottom:1px solid #6a7890"></div>
<div class="t b" style="left:1395.4px;top:177px;width:113.2px;text-align:center;font-size:33.5px;color:#2e2e2e">8.0</div>
<div class="a" style="left:1508.6px;top:176px;width:113.2px;height:36px;background:#b9cce4;border-right:1px solid #6a7890;border-bottom:1px solid #6a7890"></div>
<div class="t b" style="left:1508.6px;top:177px;width:113.2px;text-align:center;font-size:33.5px;color:#2e2e2e">9.5</div>
<div class="a" style="left:1621.8px;top:176px;width:113.2px;height:36px;background:#b9cce4;border-right:1px solid #6a7890;border-bottom:1px solid #6a7890"></div>
<div class="t b" style="left:1621.8px;top:177px;width:113.2px;text-align:center;font-size:33.5px;color:#2e2e2e">10.5</div>
<div class="a" style="left:1735.0px;top:176px;width:113.2px;height:36px;background:#b9cce4;border-right:1px solid #6a7890;border-bottom:1px solid #6a7890"></div>
<div class="t b" style="left:1735.0px;top:177px;width:113.2px;text-align:center;font-size:33.5px;color:#2e2e2e">11.5</div>
<div class="a" style="left:1848.2px;top:176px;width:113.2px;height:36px;background:#b9cce4;border-right:1px solid #6a7890;border-bottom:1px solid #6a7890"></div>
<div class="t b" style="left:1848.2px;top:177px;width:113.2px;text-align:center;font-size:33.5px;color:#2e2e2e">12.5</div>
<div class="a" style="left:603.0px;top:212px;width:113.2px;height:36px;background:#8282f2;border-right:1px solid #6a7890;border-bottom:1px solid #6a7890"></div>
<div class="t b" style="left:603.0px;top:213px;width:113.2px;text-align:center;font-size:33.5px;color:#dd0a0a">-4.0</div>
<div class="a" style="left:716.2px;top:212px;width:113.2px;height:36px;background:#8282f2;border-right:1px solid #6a7890;border-bottom:1px solid #6a7890"></div>
<div class="t b" style="left:716.2px;top:213px;width:113.2px;text-align:center;font-size:33.5px;color:#dd0a0a">-5.0</div>
<div class="a" style="left:829.4px;top:212px;width:113.2px;height:36px;background:#b9cce4;border-right:1px solid #6a7890;border-bottom:1px solid #6a7890"></div>
<div class="t b" style="left:829.4px;top:213px;width:113.2px;text-align:center;font-size:33.5px;color:#2e2e2e">5.0</div>
<div class="a" style="left:942.6px;top:212px;width:113.2px;height:36px;background:#b9cce4;border-right:1px solid #6a7890;border-bottom:1px solid #6a7890"></div>
<div class="t b" style="left:942.6px;top:213px;width:113.2px;text-align:center;font-size:33.5px;color:#2e2e2e">6.0</div>
<div class="a" style="left:1055.8px;top:212px;width:113.2px;height:36px;background:#b9cce4;border-right:1px solid #6a7890;border-bottom:1px solid #6a7890"></div>
<div class="t b" style="left:1055.8px;top:213px;width:113.2px;text-align:center;font-size:33.5px;color:#2e2e2e">6.5</div>
<div class="a" style="left:1169.0px;top:212px;width:113.2px;height:36px;background:#b9cce4;border-right:1px solid #6a7890;border-bottom:1px solid #6a7890"></div>
<div class="t b" style="left:1169.0px;top:213px;width:113.2px;text-align:center;font-size:33.5px;color:#2e2e2e">8.0</div>
<div class="a" style="left:1282.2px;top:212px;width:113.2px;height:36px;background:#b9cce4;border-right:1px solid #6a7890;border-bottom:1px solid #6a7890"></div>
<div class="t b" style="left:1282.2px;top:213px;width:113.2px;text-align:center;font-size:33.5px;color:#2e2e2e">8.5</div>
<div class="a" style="left:1395.4px;top:212px;width:113.2px;height:36px;background:#b9cce4;border-right:1px solid #6a7890;border-bottom:1px solid #6a7890"></div>
<div class="t b" style="left:1395.4px;top:213px;width:113.2px;text-align:center;font-size:33.5px;color:#2e2e2e">9.0</div>
<div class="a" style="left:1508.6px;top:212px;width:113.2px;height:36px;background:#b9cce4;border-right:1px solid #6a7890;border-bottom:1px solid #6a7890"></div>
<div class="t b" style="left:1508.6px;top:213px;width:113.2px;text-align:center;font-size:33.5px;color:#2e2e2e">11.0</div>
<div class="a" style="left:1621.8px;top:212px;width:113.2px;height:36px;background:#b9cce4;border-right:1px solid #6a7890;border-bottom:1px solid #6a7890"></div>
<div class="t b" style="left:1621.8px;top:213px;width:113.2px;text-align:center;font-size:33.5px;color:#2e2e2e">11.5</div>
<div class="a" style="left:1735.0px;top:212px;width:113.2px;height:36px;background:#b9cce4;border-right:1px solid #6a7890;border-bottom:1px solid #6a7890"></div>
<div class="t b" style="left:1735.0px;top:213px;width:113.2px;text-align:center;font-size:33.5px;color:#2e2e2e">12.5</div>
<div class="a" style="left:1848.2px;top:212px;width:113.2px;height:36px;background:#b9cce4;border-right:1px solid #6a7890;border-bottom:1px solid #6a7890"></div>
<div class="t b" style="left:1848.2px;top:213px;width:113.2px;text-align:center;font-size:33.5px;color:#2e2e2e">12.5</div>
<div class="a" style="left:603.0px;top:248px;width:113.2px;height:36px;background:#82aacc;border-right:1px solid #6a7890;border-bottom:1px solid #6a7890"></div>
<div class="t b" style="left:603.0px;top:249px;width:113.2px;text-align:center;font-size:33.5px;color:#dd0a0a">2.0</div>
<div class="a" style="left:716.2px;top:248px;width:113.2px;height:36px;background:#82aacc;border-right:1px solid #6a7890;border-bottom:1px solid #6a7890"></div>
<div class="t b" style="left:716.2px;top:249px;width:113.2px;text-align:center;font-size:33.5px;color:#dd0a0a">3.0</div>
<div class="a" style="left:829.4px;top:248px;width:113.2px;height:36px;background:#86e38c;border-right:1px solid #6a7890;border-bottom:1px solid #6a7890"></div>
<div class="t b" style="left:829.4px;top:249px;width:113.2px;text-align:center;font-size:33.5px;color:#0a14c0">12.0</div>
<div class="a" style="left:942.6px;top:248px;width:113.2px;height:36px;background:#86e38c;border-right:1px solid #6a7890;border-bottom:1px solid #6a7890"></div>
<div class="t b" style="left:942.6px;top:249px;width:113.2px;text-align:center;font-size:33.5px;color:#0a14c0">12.5</div>
<div class="a" style="left:1055.8px;top:248px;width:113.2px;height:36px;background:#86e38c;border-right:1px solid #6a7890;border-bottom:1px solid #6a7890"></div>
<div class="t b" style="left:1055.8px;top:249px;width:113.2px;text-align:center;font-size:33.5px;color:#0a14c0">12.5</div>
<div class="a" style="left:1169.0px;top:248px;width:113.2px;height:36px;background:#86e38c;border-right:1px solid #6a7890;border-bottom:1px solid #6a7890"></div>
<div class="t b" style="left:1169.0px;top:249px;width:113.2px;text-align:center;font-size:33.5px;color:#0a14c0">13.0</div>
<div class="a" style="left:1282.2px;top:248px;width:113.2px;height:36px;background:#86e38c;border-right:1px solid #6a7890;border-bottom:1px solid #6a7890"></div>
<div class="t b" style="left:1282.2px;top:249px;width:113.2px;text-align:center;font-size:33.5px;color:#0a14c0">13.0</div>
<div class="a" style="left:1395.4px;top:248px;width:113.2px;height:36px;background:#86e38c;border-right:1px solid #6a7890;border-bottom:1px solid #6a7890"></div>
<div class="t b" style="left:1395.4px;top:249px;width:113.2px;text-align:center;font-size:33.5px;color:#0a14c0">13.0</div>
<div class="a" style="left:1508.6px;top:248px;width:113.2px;height:36px;background:#86e38c;border-right:1px solid #6a7890;border-bottom:1px solid #6a7890"></div>
<div class="t b" style="left:1508.6px;top:249px;width:113.2px;text-align:center;font-size:33.5px;color:#0a14c0">15.0</div>
<div class="a" style="left:1621.8px;top:248px;width:113.2px;height:36px;background:#86e38c;border-right:1px solid #6a7890;border-bottom:1px solid #6a7890"></div>
<div class="t b" style="left:1621.8px;top:249px;width:113.2px;text-align:center;font-size:33.5px;color:#0a14c0">15.0</div>
<div class="a" style="left:1735.0px;top:248px;width:113.2px;height:36px;background:#86e38c;border-right:1px solid #6a7890;border-bottom:1px solid #6a7890"></div>
<div class="t b" style="left:1735.0px;top:249px;width:113.2px;text-align:center;font-size:33.5px;color:#0a14c0">16.0</div>
<div class="a" style="left:1848.2px;top:248px;width:113.2px;height:36px;background:#86e38c;border-right:1px solid #6a7890;border-bottom:1px solid #6a7890"></div>
<div class="t b" style="left:1848.2px;top:249px;width:113.2px;text-align:center;font-size:33.5px;color:#0a14c0">17.0</div>
<div class="a" style="left:603.0px;top:284px;width:113.2px;height:36px;background:#84b4c6;border-right:1px solid #6a7890;border-bottom:1px solid #6a7890"></div>
<div class="t b" style="left:603.0px;top:285px;width:113.2px;text-align:center;font-size:33.5px;color:#dd0a0a">5.0</div>
<div class="a" style="left:716.2px;top:284px;width:113.2px;height:36px;background:#88c0ba;border-right:1px solid #6a7890;border-bottom:1px solid #6a7890"></div>
<div class="t b" style="left:716.2px;top:285px;width:113.2px;text-align:center;font-size:33.5px;color:#dd0a0a">5.0</div>
<div class="a" style="left:829.4px;top:284px;width:113.2px;height:36px;background:#86e38c;border-right:1px solid #6a7890;border-bottom:1px solid #6a7890"></div>
<div class="t b" style="left:829.4px;top:285px;width:113.2px;text-align:center;font-size:33.5px;color:#0a14c0">16.0</div>
<div class="a" style="left:942.6px;top:284px;width:113.2px;height:36px;background:#86e38c;border-right:1px solid #6a7890;border-bottom:1px solid #6a7890"></div>
<div class="t b" style="left:942.6px;top:285px;width:113.2px;text-align:center;font-size:33.5px;color:#0a14c0">16.0</div>
<div class="a" style="left:1055.8px;top:284px;width:113.2px;height:36px;background:#b4e41c;border-right:1px solid #6a7890;border-bottom:1px solid #6a7890"></div>
<div class="t b" style="left:1055.8px;top:285px;width:113.2px;text-align:center;font-size:33.5px;color:#0a14c0">16.0</div>
<div class="a" style="left:1169.0px;top:284px;width:113.2px;height:36px;background:#d0ee12;border-right:1px solid #6a7890;border-bottom:1px solid #6a7890"></div>
<div class="t b" style="left:1169.0px;top:285px;width:113.2px;text-align:center;font-size:33.5px;color:#0a14c0">17.0</div>
<div class="a" style="left:1282.2px;top:284px;width:113.2px;height:36px;background:#b2c98e;border-right:1px solid #6a7890;border-bottom:1px solid #6a7890"></div>
<div class="t b" style="left:1282.2px;top:285px;width:113.2px;text-align:center;font-size:33.5px;color:#0a14c0">21.0</div>
<div class="a" style="left:1395.4px;top:284px;width:113.2px;height:36px;background:#b2c98e;border-right:1px solid #6a7890;border-bottom:1px solid #6a7890"></div>
<div class="t b" style="left:1395.4px;top:285px;width:113.2px;text-align:center;font-size:33.5px;color:#0a14c0">21.5</div>
<div class="a" style="left:1508.6px;top:284px;width:113.2px;height:36px;background:#b2c98e;border-right:1px solid #6a7890;border-bottom:1px solid #6a7890"></div>
<div class="t b" style="left:1508.6px;top:285px;width:113.2px;text-align:center;font-size:33.5px;color:#0a14c0">22.0</div>
<div class="a" style="left:1621.8px;top:284px;width:113.2px;height:36px;background:#b2c98e;border-right:1px solid #6a7890;border-bottom:1px solid #6a7890"></div>
<div class="t b" style="left:1621.8px;top:285px;width:113.2px;text-align:center;font-size:33.5px;color:#0a14c0">22.5</div>
<div class="a" style="left:1735.0px;top:284px;width:113.2px;height:36px;background:#b2c98e;border-right:1px solid #6a7890;border-bottom:1px solid #6a7890"></div>
<div class="t b" style="left:1735.0px;top:285px;width:113.2px;text-align:center;font-size:33.5px;color:#0a14c0">23.0</div>
<div class="a" style="left:1848.2px;top:284px;width:113.2px;height:36px;background:#b2c98e;border-right:1px solid #6a7890;border-bottom:1px solid #6a7890"></div>
<div class="t b" style="left:1848.2px;top:285px;width:113.2px;text-align:center;font-size:33.5px;color:#0a14c0">21.0</div>
<div class="a" style="left:603.0px;top:320px;width:113.2px;height:36px;background:#88c8b0;border-right:1px solid #6a7890;border-bottom:1px solid #6a7890"></div>
<div class="t b" style="left:603.0px;top:321px;width:113.2px;text-align:center;font-size:33.5px;color:#dd0a0a">8.0</div>
<div class="a" style="left:716.2px;top:320px;width:113.2px;height:36px;background:#88ccac;border-right:1px solid #6a7890;border-bottom:1px solid #6a7890"></div>
<div class="t b" style="left:716.2px;top:321px;width:113.2px;text-align:center;font-size:33.5px;color:#dd0a0a">9.0</div>
<div class="a" style="left:829.4px;top:320px;width:113.2px;height:36px;background:#86e38c;border-right:1px solid #6a7890;border-bottom:1px solid #6a7890"></div>
<div class="t b" style="left:829.4px;top:321px;width:113.2px;text-align:center;font-size:33.5px;color:#0a14c0">16.0</div>
<div class="a" style="left:942.6px;top:320px;width:113.2px;height:36px;background:#a8d890;border-right:1px solid #6a7890;border-bottom:1px solid #6a7890"></div>
<div class="t b" style="left:942.6px;top:321px;width:113.2px;text-align:center;font-size:33.5px;color:#0a14c0">18.0</div>
<div class="a" style="left:1055.8px;top:320px;width:113.2px;height:36px;background:#aad822;border-right:1px solid #6a7890;border-bottom:1px solid #6a7890"></div>
<div class="t b" style="left:1055.8px;top:321px;width:113.2px;text-align:center;font-size:33.5px;color:#0a14c0">19.0</div>
<div class="a" style="left:1169.0px;top:320px;width:113.2px;height:36px;background:#b2d82a;border-right:1px solid #6a7890;border-bottom:1px solid #6a7890"></div>
<div class="t b" style="left:1169.0px;top:321px;width:113.2px;text-align:center;font-size:33.5px;color:#0a14c0">20.0</div>
<div class="a" style="left:1282.2px;top:320px;width:113.2px;height:36px;background:#b2c98e;border-right:1px solid #6a7890;border-bottom:1px solid #6a7890"></div>
<div class="t b" style="left:1282.2px;top:321px;width:113.2px;text-align:center;font-size:33.5px;color:#0a14c0">20.5</div>
<div class="a" style="left:1395.4px;top:320px;width:113.2px;height:36px;background:#b2c98e;border-right:1px solid #6a7890;border-bottom:1px solid #6a7890"></div>
<div class="t b" style="left:1395.4px;top:321px;width:113.2px;text-align:center;font-size:33.5px;color:#0a14c0">21.0</div>
<div class="a" style="left:1508.6px;top:320px;width:113.2px;height:36px;background:#b2c98e;border-right:1px solid #6a7890;border-bottom:1px solid #6a7890"></div>
<div class="t b" style="left:1508.6px;top:321px;width:113.2px;text-align:center;font-size:33.5px;color:#0a14c0">21.5</div>
<div class="a" style="left:1621.8px;top:320px;width:113.2px;height:36px;background:#b2c98e;border-right:1px solid #6a7890;border-bottom:1px solid #6a7890"></div>
<div class="t b" style="left:1621.8px;top:321px;width:113.2px;text-align:center;font-size:33.5px;color:#0a14c0">22.0</div>
<div class="a" style="left:1735.0px;top:320px;width:113.2px;height:36px;background:#b2c98e;border-right:1px solid #6a7890;border-bottom:1px solid #6a7890"></div>
<div class="t b" style="left:1735.0px;top:321px;width:113.2px;text-align:center;font-size:33.5px;color:#0a14c0">22.5</div>
<div class="a" style="left:1848.2px;top:320px;width:113.2px;height:36px;background:#b2c98e;border-right:1px solid #6a7890;border-bottom:1px solid #6a7890"></div>
<div class="t b" style="left:1848.2px;top:321px;width:113.2px;text-align:center;font-size:33.5px;color:#0a14c0">21.0</div>
<div class="a" style="left:603.0px;top:356px;width:113.2px;height:36px;background:#88d8a2;border-right:1px solid #6a7890;border-bottom:1px solid #6a7890"></div>
<div class="t b" style="left:603.0px;top:357px;width:113.2px;text-align:center;font-size:33.5px;color:#0a0a0a">9.0</div>
<div class="a" style="left:716.2px;top:356px;width:113.2px;height:36px;background:#86e38c;border-right:1px solid #6a7890;border-bottom:1px solid #6a7890"></div>
<div class="t b" style="left:716.2px;top:357px;width:113.2px;text-align:center;font-size:33.5px;color:#dd0a0a">10.0</div>
<div class="a" style="left:829.4px;top:356px;width:113.2px;height:36px;background:#88c8aa;border-right:1px solid #6a7890;border-bottom:1px solid #6a7890"></div>
<div class="t b" style="left:829.4px;top:357px;width:113.2px;text-align:center;font-size:33.5px;color:#dd0a0a">10.0</div>
<div class="a" style="left:942.6px;top:356px;width:113.2px;height:36px;background:#86e38c;border-right:1px solid #6a7890;border-bottom:1px solid #6a7890"></div>
<div class="t b" style="left:942.6px;top:357px;width:113.2px;text-align:center;font-size:33.5px;color:#0a0a0a">17.0</div>
<div class="a" style="left:1055.8px;top:356px;width:113.2px;height:36px;background:#c6b488;border-right:1px solid #6a7890;border-bottom:1px solid #6a7890"></div>
<div class="t b" style="left:1055.8px;top:357px;width:113.2px;text-align:center;font-size:33.5px;color:#0a0a0a">25.0</div>
<div class="a" style="left:1169.0px;top:356px;width:113.2px;height:36px;background:#c6b488;border-right:1px solid #6a7890;border-bottom:1px solid #6a7890"></div>
<div class="t b" style="left:1169.0px;top:357px;width:113.2px;text-align:center;font-size:33.5px;color:#0a0a0a">26.0</div>
<div class="a" style="left:1282.2px;top:356px;width:113.2px;height:36px;background:#cab088;border-right:1px solid #6a7890;border-bottom:1px solid #6a7890"></div>
<div class="t b" style="left:1282.2px;top:357px;width:113.2px;text-align:center;font-size:33.5px;color:#0a0a0a">27.0</div>
<div class="a" style="left:1395.4px;top:356px;width:113.2px;height:36px;background:#daa488;border-right:1px solid #6a7890;border-bottom:1px solid #6a7890"></div>
<div class="t b" style="left:1395.4px;top:357px;width:113.2px;text-align:center;font-size:33.5px;color:#0a0a0a">28.4</div>
<div class="a" style="left:1508.6px;top:356px;width:113.2px;height:36px;background:#daa488;border-right:1px solid #6a7890;border-bottom:1px solid #6a7890"></div>
<div class="t b" style="left:1508.6px;top:357px;width:113.2px;text-align:center;font-size:33.5px;color:#0a0a0a">28.4</div>
<div class="a" style="left:1621.8px;top:356px;width:113.2px;height:36px;background:#daa488;border-right:1px solid #6a7890;border-bottom:1px solid #6a7890"></div>
<div class="t b" style="left:1621.8px;top:357px;width:113.2px;text-align:center;font-size:33.5px;color:#0a0a0a">28.4</div>
<div class="a" style="left:1735.0px;top:356px;width:113.2px;height:36px;background:#c2b888;border-right:1px solid #6a7890;border-bottom:1px solid #6a7890"></div>
<div class="t b" style="left:1735.0px;top:357px;width:113.2px;text-align:center;font-size:33.5px;color:#0a0a0a">24.4</div>
<div class="a" style="left:1848.2px;top:356px;width:113.2px;height:36px;background:#c2b888;border-right:1px solid #6a7890;border-bottom:1px solid #6a7890"></div>
<div class="t b" style="left:1848.2px;top:357px;width:113.2px;text-align:center;font-size:33.5px;color:#0a0a0a">25.0</div>
<div class="a" style="left:603.0px;top:392px;width:113.2px;height:36px;background:#88e0a0;border-right:1px solid #6a7890;border-bottom:1px solid #6a7890"></div>
<div class="t b" style="left:603.0px;top:393px;width:113.2px;text-align:center;font-size:33.5px;color:#0a0a0a">10.0</div>
<div class="a" style="left:716.2px;top:392px;width:113.2px;height:36px;background:#86e38c;border-right:1px solid #6a7890;border-bottom:1px solid #6a7890"></div>
<div class="t b" style="left:716.2px;top:393px;width:113.2px;text-align:center;font-size:33.5px;color:#dd0a0a">13.0</div>
<div class="a" style="left:829.4px;top:392px;width:113.2px;height:36px;background:#86e38c;border-right:1px solid #6a7890;border-bottom:1px solid #6a7890"></div>
<div class="t b" style="left:829.4px;top:393px;width:113.2px;text-align:center;font-size:33.5px;color:#dd0a0a">13.0</div>
<div class="a" style="left:942.6px;top:392px;width:113.2px;height:36px;background:#86e38c;border-right:1px solid #6a7890;border-bottom:1px solid #6a7890"></div>
<div class="t b" style="left:942.6px;top:393px;width:113.2px;text-align:center;font-size:33.5px;color:#0a0a0a">15.0</div>
<div class="a" style="left:1055.8px;top:392px;width:113.2px;height:36px;background:#c6b488;border-right:1px solid #6a7890;border-bottom:1px solid #6a7890"></div>
<div class="t b" style="left:1055.8px;top:393px;width:113.2px;text-align:center;font-size:33.5px;color:#0a0a0a">26.5</div>
<div class="a" style="left:1169.0px;top:392px;width:113.2px;height:36px;background:#c6b488;border-right:1px solid #6a7890;border-bottom:1px solid #6a7890"></div>
<div class="t b" style="left:1169.0px;top:393px;width:113.2px;text-align:center;font-size:33.5px;color:#0a0a0a">26.5</div>
<div class="a" style="left:1282.2px;top:392px;width:113.2px;height:36px;background:#daa488;border-right:1px solid #6a7890;border-bottom:1px solid #6a7890"></div>
<div class="t b" style="left:1282.2px;top:393px;width:113.2px;text-align:center;font-size:33.5px;color:#0a0a0a">29.5</div>
<div class="a" style="left:1395.4px;top:392px;width:113.2px;height:36px;background:#daa488;border-right:1px solid #6a7890;border-bottom:1px solid #6a7890"></div>
<div class="t b" style="left:1395.4px;top:393px;width:113.2px;text-align:center;font-size:33.5px;color:#0a0a0a">30.5</div>
<div class="a" style="left:1508.6px;top:392px;width:113.2px;height:36px;background:#daa488;border-right:1px solid #6a7890;border-bottom:1px solid #6a7890"></div>
<div class="t b" style="left:1508.6px;top:393px;width:113.2px;text-align:center;font-size:33.5px;color:#0a0a0a">30.5</div>
<div class="a" style="left:1621.8px;top:392px;width:113.2px;height:36px;background:#daa488;border-right:1px solid #6a7890;border-bottom:1px solid #6a7890"></div>
<div class="t b" style="left:1621.8px;top:393px;width:113.2px;text-align:center;font-size:33.5px;color:#0a0a0a">30.5</div>
<div class="a" style="left:1735.0px;top:392px;width:113.2px;height:36px;background:#c2b888;border-right:1px solid #6a7890;border-bottom:1px solid #6a7890"></div>
<div class="t b" style="left:1735.0px;top:393px;width:113.2px;text-align:center;font-size:33.5px;color:#0a0a0a">26.4</div>
<div class="a" style="left:1848.2px;top:392px;width:113.2px;height:36px;background:#c2b888;border-right:1px solid #6a7890;border-bottom:1px solid #6a7890"></div>
<div class="t b" style="left:1848.2px;top:393px;width:113.2px;text-align:center;font-size:33.5px;color:#0a0a0a">25.0</div>
<div class="a" style="left:603.0px;top:428px;width:113.2px;height:36px;background:#88d2a6;border-right:1px solid #6a7890;border-bottom:1px solid #6a7890"></div>
<div class="t b" style="left:603.0px;top:429px;width:113.2px;text-align:center;font-size:33.5px;color:#0a0a0a">10.0</div>
<div class="a" style="left:716.2px;top:428px;width:113.2px;height:36px;background:#88d2a6;border-right:1px solid #6a7890;border-bottom:1px solid #6a7890"></div>
<div class="t b" style="left:716.2px;top:429px;width:113.2px;text-align:center;font-size:33.5px;color:#0a0a0a">10.0</div>
<div class="a" style="left:829.4px;top:428px;width:113.2px;height:36px;background:#88d2a6;border-right:1px solid #6a7890;border-bottom:1px solid #6a7890"></div>
<div class="t b" style="left:829.4px;top:429px;width:113.2px;text-align:center;font-size:33.5px;color:#0a0a0a">10.0</div>
<div class="a" style="left:942.6px;top:428px;width:113.2px;height:36px;background:#b0c888;border-right:1px solid #6a7890;border-bottom:1px solid #6a7890"></div>
<div class="t b" style="left:942.6px;top:429px;width:113.2px;text-align:center;font-size:33.5px;color:#0a0a0a">21.1</div>
<div class="a" style="left:1055.8px;top:428px;width:113.2px;height:36px;background:#daa488;border-right:1px solid #6a7890;border-bottom:1px solid #6a7890"></div>
<div class="t b" style="left:1055.8px;top:429px;width:113.2px;text-align:center;font-size:33.5px;color:#0a0a0a">31.1</div>
<div class="a" style="left:1169.0px;top:428px;width:113.2px;height:36px;background:#daa488;border-right:1px solid #6a7890;border-bottom:1px solid #6a7890"></div>
<div class="t b" style="left:1169.0px;top:429px;width:113.2px;text-align:center;font-size:33.5px;color:#0a0a0a">31.1</div>
<div class="a" style="left:1282.2px;top:428px;width:113.2px;height:36px;background:#e89888;border-right:1px solid #6a7890;border-bottom:1px solid #6a7890"></div>
<div class="t b" style="left:1282.2px;top:429px;width:113.2px;text-align:center;font-size:33.5px;color:#0a0a0a">34.1</div>
<div class="a" style="left:1395.4px;top:428px;width:113.2px;height:36px;background:#f49088;border-right:1px solid #6a7890;border-bottom:1px solid #6a7890"></div>
<div class="t b" style="left:1395.4px;top:429px;width:113.2px;text-align:center;font-size:33.5px;color:#0a0a0a">35.1</div>
<div class="a" style="left:1508.6px;top:428px;width:113.2px;height:36px;background:#f49088;border-right:1px solid #6a7890;border-bottom:1px solid #6a7890"></div>
<div class="t b" style="left:1508.6px;top:429px;width:113.2px;text-align:center;font-size:33.5px;color:#0a0a0a">35.1</div>
<div class="a" style="left:1621.8px;top:428px;width:113.2px;height:36px;background:#f49088;border-right:1px solid #6a7890;border-bottom:1px solid #6a7890"></div>
<div class="t b" style="left:1621.8px;top:429px;width:113.2px;text-align:center;font-size:33.5px;color:#0a0a0a">35.1</div>
<div class="a" style="left:1735.0px;top:428px;width:113.2px;height:36px;background:#daa488;border-right:1px solid #6a7890;border-bottom:1px solid #6a7890"></div>
<div class="t b" style="left:1735.0px;top:429px;width:113.2px;text-align:center;font-size:33.5px;color:#0a0a0a">31.0</div>
<div class="a" style="left:1848.2px;top:428px;width:113.2px;height:36px;background:#e49488;border-right:1px solid #6a7890;border-bottom:1px solid #6a7890"></div>
<div class="t b" style="left:1848.2px;top:429px;width:113.2px;text-align:center;font-size:33.5px;color:#0a0a0a">32.0</div>
<div class="a" style="left:603.0px;top:464px;width:113.2px;height:36px;background:#88d2a6;border-right:1px solid #6a7890;border-bottom:1px solid #6a7890"></div>
<div class="t b" style="left:603.0px;top:465px;width:113.2px;text-align:center;font-size:33.5px;color:#0a0a0a">10.0</div>
<div class="a" style="left:716.2px;top:464px;width:113.2px;height:36px;background:#88d2a6;border-right:1px solid #6a7890;border-bottom:1px solid #6a7890"></div>
<div class="t b" style="left:716.2px;top:465px;width:113.2px;text-align:center;font-size:33.5px;color:#0a0a0a">10.0</div>
<div class="a" style="left:829.4px;top:464px;width:113.2px;height:36px;background:#88d2a6;border-right:1px solid #6a7890;border-bottom:1px solid #6a7890"></div>
<div class="t b" style="left:829.4px;top:465px;width:113.2px;text-align:center;font-size:33.5px;color:#0a0a0a">10.0</div>
<div class="a" style="left:942.6px;top:464px;width:113.2px;height:36px;background:#b0c888;border-right:1px solid #6a7890;border-bottom:1px solid #6a7890"></div>
<div class="t b" style="left:942.6px;top:465px;width:113.2px;text-align:center;font-size:33.5px;color:#0a0a0a">21.1</div>
<div class="a" style="left:1055.8px;top:464px;width:113.2px;height:36px;background:#f49088;border-right:1px solid #6a7890;border-bottom:1px solid #6a7890"></div>
<div class="t b" style="left:1055.8px;top:465px;width:113.2px;text-align:center;font-size:33.5px;color:#0a0a0a">33.1</div>
<div class="a" style="left:1169.0px;top:464px;width:113.2px;height:36px;background:#f49088;border-right:1px solid #6a7890;border-bottom:1px solid #6a7890"></div>
<div class="t b" style="left:1169.0px;top:465px;width:113.2px;text-align:center;font-size:33.5px;color:#0a0a0a">33.1</div>
<div class="a" style="left:1282.2px;top:464px;width:113.2px;height:36px;background:#fc8a88;border-right:1px solid #6a7890;border-bottom:1px solid #6a7890"></div>
<div class="t b" style="left:1282.2px;top:465px;width:113.2px;text-align:center;font-size:33.5px;color:#0a0a0a">36.1</div>
<div class="a" style="left:1395.4px;top:464px;width:113.2px;height:36px;background:#fc8a88;border-right:1px solid #6a7890;border-bottom:1px solid #6a7890"></div>
<div class="t b" style="left:1395.4px;top:465px;width:113.2px;text-align:center;font-size:33.5px;color:#0a0a0a">36.1</div>
<div class="a" style="left:1508.6px;top:464px;width:113.2px;height:36px;background:#fc8a88;border-right:1px solid #6a7890;border-bottom:1px solid #6a7890"></div>
<div class="t b" style="left:1508.6px;top:465px;width:113.2px;text-align:center;font-size:33.5px;color:#0a0a0a">36.1</div>
<div class="a" style="left:1621.8px;top:464px;width:113.2px;height:36px;background:#fc8a88;border-right:1px solid #6a7890;border-bottom:1px solid #6a7890"></div>
<div class="t b" style="left:1621.8px;top:465px;width:113.2px;text-align:center;font-size:33.5px;color:#0a0a0a">36.1</div>
<div class="a" style="left:1735.0px;top:464px;width:113.2px;height:36px;background:#e29688;border-right:1px solid #6a7890;border-bottom:1px solid #6a7890"></div>
<div class="t b" style="left:1735.0px;top:465px;width:113.2px;text-align:center;font-size:33.5px;color:#0a0a0a">32.0</div>
<div class="a" style="left:1848.2px;top:464px;width:113.2px;height:36px;background:#e89288;border-right:1px solid #6a7890;border-bottom:1px solid #6a7890"></div>
<div class="t b" style="left:1848.2px;top:465px;width:113.2px;text-align:center;font-size:33.5px;color:#0a0a0a">33.0</div>
<div class="a" style="left:603.0px;top:500px;width:113.2px;height:36px;background:#88b8c6;border-right:1px solid #6a7890;border-bottom:1px solid #6a7890"></div>
<div class="t b" style="left:603.0px;top:501px;width:113.2px;text-align:center;font-size:33.5px;color:#0a0a0a">5.0</div>
<div class="a" style="left:716.2px;top:500px;width:113.2px;height:36px;background:#88d2a6;border-right:1px solid #6a7890;border-bottom:1px solid #6a7890"></div>
<div class="t b" style="left:716.2px;top:501px;width:113.2px;text-align:center;font-size:33.5px;color:#0a0a0a">10.0</div>
<div class="a" style="left:829.4px;top:500px;width:113.2px;height:36px;background:#88d2a6;border-right:1px solid #6a7890;border-bottom:1px solid #6a7890"></div>
<div class="t b" style="left:829.4px;top:501px;width:113.2px;text-align:center;font-size:33.5px;color:#0a0a0a">10.0</div>
<div class="a" style="left:942.6px;top:500px;width:113.2px;height:36px;background:#fc8a88;border-right:1px solid #6a7890;border-bottom:1px solid #6a7890"></div>
<div class="t b" style="left:942.6px;top:501px;width:113.2px;text-align:center;font-size:33.5px;color:#0a0a0a">35.0</div>
<div class="a" style="left:1055.8px;top:500px;width:113.2px;height:36px;background:#f49088;border-right:1px solid #6a7890;border-bottom:1px solid #6a7890"></div>
<div class="t b" style="left:1055.8px;top:501px;width:113.2px;text-align:center;font-size:33.5px;color:#0a0a0a">35.0</div>
<div class="a" style="left:1169.0px;top:500px;width:113.2px;height:36px;background:#f49088;border-right:1px solid #6a7890;border-bottom:1px solid #6a7890"></div>
<div class="t b" style="left:1169.0px;top:501px;width:113.2px;text-align:center;font-size:33.5px;color:#0a0a0a">35.0</div>
<div class="a" style="left:1282.2px;top:500px;width:113.2px;height:36px;background:#f49088;border-right:1px solid #6a7890;border-bottom:1px solid #6a7890"></div>
<div class="t b" style="left:1282.2px;top:501px;width:113.2px;text-align:center;font-size:33.5px;color:#0a0a0a">35.0</div>
<div class="a" style="left:1395.4px;top:500px;width:113.2px;height:36px;background:#f49088;border-right:1px solid #6a7890;border-bottom:1px solid #6a7890"></div>
<div class="t b" style="left:1395.4px;top:501px;width:113.2px;text-align:center;font-size:33.5px;color:#0a0a0a">35.0</div>
<div class="a" style="left:1508.6px;top:500px;width:113.2px;height:36px;background:#f49088;border-right:1px solid #6a7890;border-bottom:1px solid #6a7890"></div>
<div class="t b" style="left:1508.6px;top:501px;width:113.2px;text-align:center;font-size:33.5px;color:#0a0a0a">35.0</div>
<div class="a" style="left:1621.8px;top:500px;width:113.2px;height:36px;background:#f49088;border-right:1px solid #6a7890;border-bottom:1px solid #6a7890"></div>
<div class="t b" style="left:1621.8px;top:501px;width:113.2px;text-align:center;font-size:33.5px;color:#0a0a0a">35.0</div>
<div class="a" style="left:1735.0px;top:500px;width:113.2px;height:36px;background:#f49088;border-right:1px solid #6a7890;border-bottom:1px solid #6a7890"></div>
<div class="t b" style="left:1735.0px;top:501px;width:113.2px;text-align:center;font-size:33.5px;color:#0a0a0a">34.0</div>
<div class="a" style="left:1848.2px;top:500px;width:113.2px;height:36px;background:#f49088;border-right:1px solid #6a7890;border-bottom:1px solid #6a7890"></div>
<div class="t b" style="left:1848.2px;top:501px;width:113.2px;text-align:center;font-size:33.5px;color:#0a0a0a">34.0</div>
<div class="a" style="left:603.0px;top:536px;width:113.2px;height:36px;background:#88d2a6;border-right:1px solid #6a7890;border-bottom:1px solid #6a7890"></div>
<div class="t b" style="left:603.0px;top:537px;width:113.2px;text-align:center;font-size:33.5px;color:#0a0a0a">10.0</div>
<div class="a" style="left:716.2px;top:536px;width:113.2px;height:36px;background:#88d2a6;border-right:1px solid #6a7890;border-bottom:1px solid #6a7890"></div>
<div class="t b" style="left:716.2px;top:537px;width:113.2px;text-align:center;font-size:33.5px;color:#0a0a0a">10.0</div>
<div class="a" style="left:829.4px;top:536px;width:113.2px;height:36px;background:#88d2a6;border-right:1px solid #6a7890;border-bottom:1px solid #6a7890"></div>
<div class="t b" style="left:829.4px;top:537px;width:113.2px;text-align:center;font-size:33.5px;color:#0a0a0a">10.0</div>
<div class="a" style="left:942.6px;top:536px;width:113.2px;height:36px;background:#fc8a88;border-right:1px solid #6a7890;border-bottom:1px solid #6a7890"></div>
<div class="t b" style="left:942.6px;top:537px;width:113.2px;text-align:center;font-size:33.5px;color:#0a0a0a">35.0</div>
<div class="a" style="left:1055.8px;top:536px;width:113.2px;height:36px;background:#fc8a88;border-right:1px solid #6a7890;border-bottom:1px solid #6a7890"></div>
<div class="t b" style="left:1055.8px;top:537px;width:113.2px;text-align:center;font-size:33.5px;color:#0a0a0a">35.0</div>
<div class="a" style="left:1169.0px;top:536px;width:113.2px;height:36px;background:#f49088;border-right:1px solid #6a7890;border-bottom:1px solid #6a7890"></div>
<div class="t b" style="left:1169.0px;top:537px;width:113.2px;text-align:center;font-size:33.5px;color:#0a0a0a">35.0</div>
<div class="a" style="left:1282.2px;top:536px;width:113.2px;height:36px;background:#f49088;border-right:1px solid #6a7890;border-bottom:1px solid #6a7890"></div>
<div class="t b" style="left:1282.2px;top:537px;width:113.2px;text-align:center;font-size:33.5px;color:#0a0a0a">35.0</div>
<div class="a" style="left:1395.4px;top:536px;width:113.2px;height:36px;background:#f49088;border-right:1px solid #6a7890;border-bottom:1px solid #6a7890"></div>
<div class="t b" style="left:1395.4px;top:537px;width:113.2px;text-align:center;font-size:33.5px;color:#0a0a0a">35.0</div>
<div class="a" style="left:1508.6px;top:536px;width:113.2px;height:36px;background:#f49088;border-right:1px solid #6a7890;border-bottom:1px solid #6a7890"></div>
<div class="t b" style="left:1508.6px;top:537px;width:113.2px;text-align:center;font-size:33.5px;color:#0a0a0a">35.0</div>
<div class="a" style="left:1621.8px;top:536px;width:113.2px;height:36px;background:#f49088;border-right:1px solid #6a7890;border-bottom:1px solid #6a7890"></div>
<div class="t b" style="left:1621.8px;top:537px;width:113.2px;text-align:center;font-size:33.5px;color:#0a0a0a">35.0</div>
<div class="a" style="left:1735.0px;top:536px;width:113.2px;height:36px;background:#e49488;border-right:1px solid #6a7890;border-bottom:1px solid #6a7890"></div>
<div class="t b" style="left:1735.0px;top:537px;width:113.2px;text-align:center;font-size:33.5px;color:#0a0a0a">31.9</div>
<div class="a" style="left:1848.2px;top:536px;width:113.2px;height:36px;background:#e49488;border-right:1px solid #6a7890;border-bottom:1px solid #6a7890"></div>
<div class="t b" style="left:1848.2px;top:537px;width:113.2px;text-align:center;font-size:33.5px;color:#0a0a0a">31.0</div>
<div class="a" style="left:603.0px;top:572px;width:113.2px;height:36px;background:#a6d888;border-right:1px solid #6a7890;border-bottom:1px solid #6a7890"></div>
<div class="t b" style="left:603.0px;top:573px;width:113.2px;text-align:center;font-size:33.5px;color:#0a0a0a">20.0</div>
<div class="a" style="left:716.2px;top:572px;width:113.2px;height:36px;background:#a6d888;border-right:1px solid #6a7890;border-bottom:1px solid #6a7890"></div>
<div class="t b" style="left:716.2px;top:573px;width:113.2px;text-align:center;font-size:33.5px;color:#0a0a0a">20.0</div>
<div class="a" style="left:829.4px;top:572px;width:113.2px;height:36px;background:#a6d888;border-right:1px solid #6a7890;border-bottom:1px solid #6a7890"></div>
<div class="t b" style="left:829.4px;top:573px;width:113.2px;text-align:center;font-size:33.5px;color:#0a0a0a">20.0</div>
<div class="a" style="left:942.6px;top:572px;width:113.2px;height:36px;background:#a6d888;border-right:1px solid #6a7890;border-bottom:1px solid #6a7890"></div>
<div class="t b" style="left:942.6px;top:573px;width:113.2px;text-align:center;font-size:33.5px;color:#0a0a0a">20.0</div>
<div class="a" style="left:1055.8px;top:572px;width:113.2px;height:36px;background:#c6b488;border-right:1px solid #6a7890;border-bottom:1px solid #6a7890"></div>
<div class="t b" style="left:1055.8px;top:573px;width:113.2px;text-align:center;font-size:33.5px;color:#0a0a0a">25.9</div>
<div class="a" style="left:1169.0px;top:572px;width:113.2px;height:36px;background:#c6b488;border-right:1px solid #6a7890;border-bottom:1px solid #6a7890"></div>
<div class="t b" style="left:1169.0px;top:573px;width:113.2px;text-align:center;font-size:33.5px;color:#0a0a0a">28.0</div>
<div class="a" style="left:1282.2px;top:572px;width:113.2px;height:36px;background:#c6b488;border-right:1px solid #6a7890;border-bottom:1px solid #6a7890"></div>
<div class="t b" style="left:1282.2px;top:573px;width:113.2px;text-align:center;font-size:33.5px;color:#0a0a0a">28.0</div>
<div class="a" style="left:1395.4px;top:572px;width:113.2px;height:36px;background:#e29488;border-right:1px solid #6a7890;border-bottom:1px solid #6a7890"></div>
<div class="t b" style="left:1395.4px;top:573px;width:113.2px;text-align:center;font-size:33.5px;color:#0a0a0a">33.0</div>
<div class="a" style="left:1508.6px;top:572px;width:113.2px;height:36px;background:#e29488;border-right:1px solid #6a7890;border-bottom:1px solid #6a7890"></div>
<div class="t b" style="left:1508.6px;top:573px;width:113.2px;text-align:center;font-size:33.5px;color:#0a0a0a">33.0</div>
<div class="a" style="left:1621.8px;top:572px;width:113.2px;height:36px;background:#e29488;border-right:1px solid #6a7890;border-bottom:1px solid #6a7890"></div>
<div class="t b" style="left:1621.8px;top:573px;width:113.2px;text-align:center;font-size:33.5px;color:#0a0a0a">33.0</div>
<div class="a" style="left:1735.0px;top:572px;width:113.2px;height:36px;background:#e29488;border-right:1px solid #6a7890;border-bottom:1px solid #6a7890"></div>
<div class="t b" style="left:1735.0px;top:573px;width:113.2px;text-align:center;font-size:33.5px;color:#0a0a0a">33.0</div>
<div class="a" style="left:1848.2px;top:572px;width:113.2px;height:36px;background:#e29488;border-right:1px solid #6a7890;border-bottom:1px solid #6a7890"></div>
<div class="t b" style="left:1848.2px;top:573px;width:113.2px;text-align:center;font-size:33.5px;color:#0a0a0a">33.0</div>
<div class="a" style="left:489px;top:608px;width:114px;height:36px;background:#efefef;border:1px solid #9a9a9a"></div>
<div class="t" style="left:537px;top:616px;font-size:18px;color:#b8b8b8">&#8627;</div>
<div class="a" style="left:603.0px;top:608px;width:114.2px;height:36px;background:linear-gradient(90deg,#bdbdbd,#d2d2d2 50%,#c2c2c6);border-right:2px solid #b0b0b0;border-bottom:2px solid #8a8a8a"></div>
<div class="t b" style="left:603.0px;top:609px;width:113.2px;text-align:center;font-size:33.5px;color:#0a0a0a">701</div>
<div class="a" style="left:716.2px;top:608px;width:114.2px;height:36px;background:linear-gradient(90deg,#bdbdbd,#d2d2d2 50%,#c2c2c6);border-right:2px solid #b0b0b0;border-bottom:2px solid #8a8a8a"></div>
<div class="t b" style="left:716.2px;top:609px;width:113.2px;text-align:center;font-size:33.5px;color:#0a0a0a">900</div>
<div class="a" style="left:829.4px;top:608px;width:114.2px;height:36px;background:linear-gradient(#e6e6ee,#dcdce4);border-right:2px solid #b0b0b0;border-bottom:2px solid #8a8a8a"></div>
<div class="t b" style="left:829.4px;top:609px;width:113.2px;text-align:center;font-size:33.5px;color:#0a0a0a">1200</div>
<div class="a" style="left:942.6px;top:608px;width:114.2px;height:36px;background:linear-gradient(#e6e6ee,#dcdce4);border-right:2px solid #b0b0b0;border-bottom:2px solid #8a8a8a"></div>
<div class="t b" style="left:942.6px;top:609px;width:113.2px;text-align:center;font-size:33.5px;color:#0a0a0a">1500</div>
<div class="a" style="left:1055.8px;top:608px;width:114.2px;height:36px;background:linear-gradient(#e6e6ee,#dcdce4);border-right:2px solid #b0b0b0;border-bottom:2px solid #8a8a8a"></div>
<div class="t b" style="left:1055.8px;top:609px;width:113.2px;text-align:center;font-size:33.5px;color:#0a0a0a">2000</div>
<div class="a" style="left:1169.0px;top:608px;width:114.2px;height:36px;background:linear-gradient(#e6e6ee,#dcdce4);border-right:2px solid #b0b0b0;border-bottom:2px solid #8a8a8a"></div>
<div class="t b" style="left:1169.0px;top:609px;width:113.2px;text-align:center;font-size:33.5px;color:#0a0a0a">2600</div>
<div class="a" style="left:1282.2px;top:608px;width:114.2px;height:36px;background:linear-gradient(#e6e6ee,#dcdce4);border-right:2px solid #b0b0b0;border-bottom:2px solid #8a8a8a"></div>
<div class="t b" style="left:1282.2px;top:609px;width:113.2px;text-align:center;font-size:33.5px;color:#0a0a0a">3100</div>
<div class="a" style="left:1395.4px;top:608px;width:114.2px;height:36px;background:linear-gradient(#e6e6ee,#dcdce4);border-right:2px solid #b0b0b0;border-bottom:2px solid #8a8a8a"></div>
<div class="t b" style="left:1395.4px;top:609px;width:113.2px;text-align:center;font-size:33.5px;color:#0a0a0a">4000</div>
<div class="a" style="left:1508.6px;top:608px;width:114.2px;height:36px;background:linear-gradient(#e6e6ee,#dcdce4);border-right:2px solid #b0b0b0;border-bottom:2px solid #8a8a8a"></div>
<div class="t b" style="left:1508.6px;top:609px;width:113.2px;text-align:center;font-size:33.5px;color:#0a0a0a">4500</div>
<div class="a" style="left:1621.8px;top:608px;width:114.2px;height:36px;background:linear-gradient(#e6e6ee,#dcdce4);border-right:2px solid #b0b0b0;border-bottom:2px solid #8a8a8a"></div>
<div class="t b" style="left:1621.8px;top:609px;width:113.2px;text-align:center;font-size:33.5px;color:#0a0a0a">4750</div>
<div class="a" style="left:1735.0px;top:608px;width:114.2px;height:36px;background:linear-gradient(#e6e6ee,#dcdce4);border-right:2px solid #b0b0b0;border-bottom:2px solid #8a8a8a"></div>
<div class="t b" style="left:1735.0px;top:609px;width:113.2px;text-align:center;font-size:33.5px;color:#0a0a0a">5000</div>
<div class="a" style="left:1848.2px;top:608px;width:114.2px;height:36px;background:linear-gradient(#e6e6ee,#dcdce4);border-right:2px solid #b0b0b0;border-bottom:2px solid #8a8a8a"></div>
<div class="t b" style="left:1848.2px;top:609px;width:113.2px;text-align:center;font-size:33.5px;color:#0a0a0a">5500</div>
<svg class="a" style="left:1124px;top:288px" width="130" height="45"><ellipse cx="63" cy="22" rx="55" ry="15.5" fill="none" stroke="#1a2aa0" stroke-width="2"/><path d="M40 28 L65 28 L78 20" stroke="#1a2aa0" stroke-width="2" stroke-dasharray="3 2" fill="none"/></svg>
<div class="a" style="left:460px;top:728px;width:1460px;height:8px;background:linear-gradient(rgba(0,0,0,0.24),rgba(0,0,0,0))"></div>
<div class="a" style="left:1491px;top:676px;width:116px;height:47px;border:1px solid #a0a8b8;background:linear-gradient(#fafcfe,#e6edf5 50%,#c8d8ea)"></div>
<svg class="a" style="left:1535px;top:686px" width="26" height="26"><path d="M5 8 L12 8 Q20 8 20 16 L20 22" stroke="#2050a0" stroke-width="4" fill="none"/><path d="M4 4 L4 12 L10 12" stroke="#4070c0" stroke-width="2" fill="none"/></svg>
<div class="a" style="left:1610px;top:676px;width:115px;height:47px;border:1px solid #a0a8b8;background:#ececec"></div>
<svg class="a" style="left:1654px;top:688px" width="26" height="26"><path d="M22 8 L14 8 Q7 8 7 16 L7 22" stroke="#c8c8c8" stroke-width="5" fill="none"/></svg>
<div class="a" style="left:1727px;top:676px;width:116px;height:47px;border:1px solid #a0a8b8;background:linear-gradient(#fafcfe,#e6edf5 50%,#c8d8ea)"></div>
<svg class="a" style="left:1746px;top:685px" width="30" height="30" viewBox="0 0 30 30"><circle cx="15" cy="15" r="15" fill="#5e5e5e"/><path d="M15 5 Q21 12 21 17 Q21 23 15 23 Q9 23 9 17 Q9 13 12 10 Q12 14 14 15 Q13 9 15 5Z" fill="#f4f4f4"/></svg><div class="t b" style="left:1784px;top:691px;font-size:18px;color:#222"><span class="u">B</span>urn</div>
<div class="a" style="left:1845px;top:676px;width:80px;height:47px;border:1px solid #a0a8b8;background:linear-gradient(#fafcfe,#e6edf5 50%,#c8d8ea)"></div>
<div class="t b" style="left:1877px;top:691px;font-size:18px;color:#222"><span class="u">C</span>lose</div>
<div class="a" style="left:0;top:1020px;width:1920px;height:60px;background:#070b12"></div>
<svg class="a" style="left:24px;top:1038px" width="25" height="25" viewBox="0 0 25 25"><path d="M0 3.5L10.5 2V12H0Z M11.5 1.8L25 0V12H11.5Z M0 13H10.5V23L0 21.5Z M11.5 13H25V25L11.5 23.2Z" fill="#fff"/></svg>
<div class="a" style="left:72px;top:1020px;width:516px;height:60px;background:#f0f0f0"></div>
<div class="a" style="left:86px;top:1035px;width:31px;height:31px;border-radius:50%;border:4px solid #111"></div>
<div class="t" style="left:132px;top:1039px;font-size:21px;letter-spacing:-0.4px;color:#333">Type here to search</div>
<svg class="a" style="left:545px;top:1036px" width="24" height="30"><rect x="7" y="1" width="10" height="17" rx="5" fill="none" stroke="#222" stroke-width="2"/><path d="M3 13 Q3 22 12 22 Q21 22 21 13 M12 22 V27 M7 27 H17" stroke="#222" stroke-width="2" fill="none"/></svg>
<svg class="a" style="left:610px;top:1036px" width="28" height="28"><path d="M1 3H17M1 25H17M3 8H15V20H3Z M22 2V9 M22 13V15 M22 19V26" stroke="#fff" stroke-width="2" fill="none"/></svg>
<svg class="a" style="left:685px;top:1033px" width="34" height="34" viewBox="0 0 34 34"><path d="M5 17 A12 12 0 1 1 29 17 L12 17 Q12 25 20 25 Q25 25 29 22 L29 29 Q24 32 18 32 Q4 32 4 18 Z" fill="#1a78d8"/><path d="M12 13 Q13 8 17 8 Q22 8 22 13 Z" fill="#070b12"/></svg>
<div class="a" style="left:760px;top:1038px;width:32px;height:24px;background:#f0c850;border-radius:2px"></div><div class="a" style="left:760px;top:1036px;width:14px;height:5px;background:#e0b040"></div><div class="a" style="left:768px;top:1048px;width:16px;height:12px;border:3px solid #2a88d8;border-bottom:none;border-radius:3px 3px 0 0"></div>
<div class="a" style="left:835px;top:1034px;width:19px;height:29px;background:#2b579a"></div><div class="a" style="left:854px;top:1038px;width:13px;height:22px;background:repeating-linear-gradient(180deg,#fff 0 2px,#2b579a 2px 3px);border:1px solid #fff"></div><div class="t b" style="left:837px;top:1041px;font-size:16px;color:#fff">W</div>
<div class="a" style="left:910px;top:1034px;width:19px;height:30px;background:#80397b"></div><div class="a" style="left:929px;top:1038px;width:12px;height:22px;background:repeating-linear-gradient(180deg,#f4e4f4 0 2px,#80397b 2px 3px);border:1px solid #f4e4f4"></div><div class="t b" style="left:912px;top:1041px;font-size:17px;color:#fff">N</div>
<div class="a" style="left:984px;top:1033px;width:36px;height:27px;background:#86307e;border:2px solid #e0d8e0;border-radius:3px"></div><div class="a" style="left:998px;top:1060px;width:8px;height:4px;background:#ddd"></div><div class="a" style="left:993px;top:1063px;width:18px;height:2px;background:#ddd"></div><div class="a" style="left:987px;top:1036px;width:6px;height:6px;border-radius:50%;background:#f03030"></div><svg class="a" style="left:992px;top:1039px" width="22" height="16"><circle cx="6" cy="3.5" r="3" fill="#fff"/><circle cx="13" cy="3.5" r="3" fill="#fff"/><rect x="2" y="7" width="13" height="8" fill="#fff"/><path d="M15 11L20 7V15Z" fill="#fff"/></svg>
<div class="a" style="left:971px;top:1077px;width:58px;height:3px;background:#76b9ed"></div>
<div class="a" style="left:1040px;top:1020px;width:73px;height:60px;background:#3a3f48"></div>
<div class="a" style="left:1040px;top:1077px;width:73px;height:3px;background:#76b9ed"></div>
<svg class="a" style="left:1052px;top:1030px" width="36" height="39" viewBox="0 0 26 28"><defs><linearGradient id="tsg" x1="0" y1="0" x2="0" y2="1"><stop offset="0" stop-color="#c8e4fc"/><stop offset="1" stop-color="#3a7ed0"/></linearGradient></defs><rect x="3" y="6" width="13" height="18" fill="#f8f0c0" stroke="#b8a050" stroke-width="1.2"/><rect x="6" y="8" width="13" height="16" fill="url(#tsg)" stroke="#3a70b8" stroke-width="0.8"/><text x="12.5" y="16" font-family="Liberation Sans" font-weight="bold" font-size="6" text-anchor="middle" fill="#0a3a80">101</text><path d="M9 21 Q11 18 14 21 L19 23 Q22 20 24 22 M9 25 Q11 27 14 24 L19 23 Q22 26 24 25" stroke="#808890" stroke-width="1.6" fill="none"/></svg>
<svg class="a" style="left:1480px;top:1037px" width="26" height="26"><circle cx="17" cy="7" r="5" fill="none" stroke="#fff" stroke-width="1.8"/><path d="M10 18 Q10 12 17 12 Q24 12 24 18" fill="none" stroke="#fff" stroke-width="1.8"/><circle cx="8" cy="13" r="4" fill="none" stroke="#fff" stroke-width="1.8"/><path d="M2 24 Q2 18 8 18 Q14 18 14 24" fill="none" stroke="#fff" stroke-width="1.8"/></svg>
<svg class="a" style="left:1541px;top:1043px" width="22" height="14"><path d="M2 12L11 3L20 12" stroke="#fff" stroke-width="1.8" fill="none"/></svg>
<div class="a" style="left:1589px;top:1044px;width:20px;height:13px;border:2px solid #fff"></div><div class="a" style="left:1592px;top:1047px;width:8px;height:7px;background:#fff"></div><div class="a" style="left:1609px;top:1048px;width:2px;height:5px;background:#fff"></div>
<div class="t" style="left:1634px;top:1035px;font-size:14px;color:#fff">*</div>
<svg class="a" style="left:1638px;top:1040px" width="24" height="24"><path d="M22 2 A20 20 0 0 0 2 22 M22 8 A14 14 0 0 0 8 22 M22 14 A8 8 0 0 0 14 22" stroke="#8a8a8a" stroke-width="1.6" fill="none"/><circle cx="21" cy="21" r="1.5" fill="#8a8a8a"/></svg>
<div class="t" style="left:1683px;top:1043px;font-size:17px;letter-spacing:-0.6px;color:#fff">ENG</div>
<div class="t" style="left:1751px;top:1028px;font-size:18px;letter-spacing:-0.5px;color:#fff">5:44 PM</div>
<div class="t" style="left:1741px;top:1056px;font-size:18.5px;color:#fff">2/10/2018</div>
<svg class="a" style="left:1856px;top:1036px" width="28" height="28"><path d="M2 3H26V20H17L13 25L9 20H2Z" stroke="#fff" stroke-width="1.6" fill="none"/></svg>
<div class="a" style="left:1906px;top:1020px;width:1px;height:60px;background:#4a4e56"></div>
</body></html>
